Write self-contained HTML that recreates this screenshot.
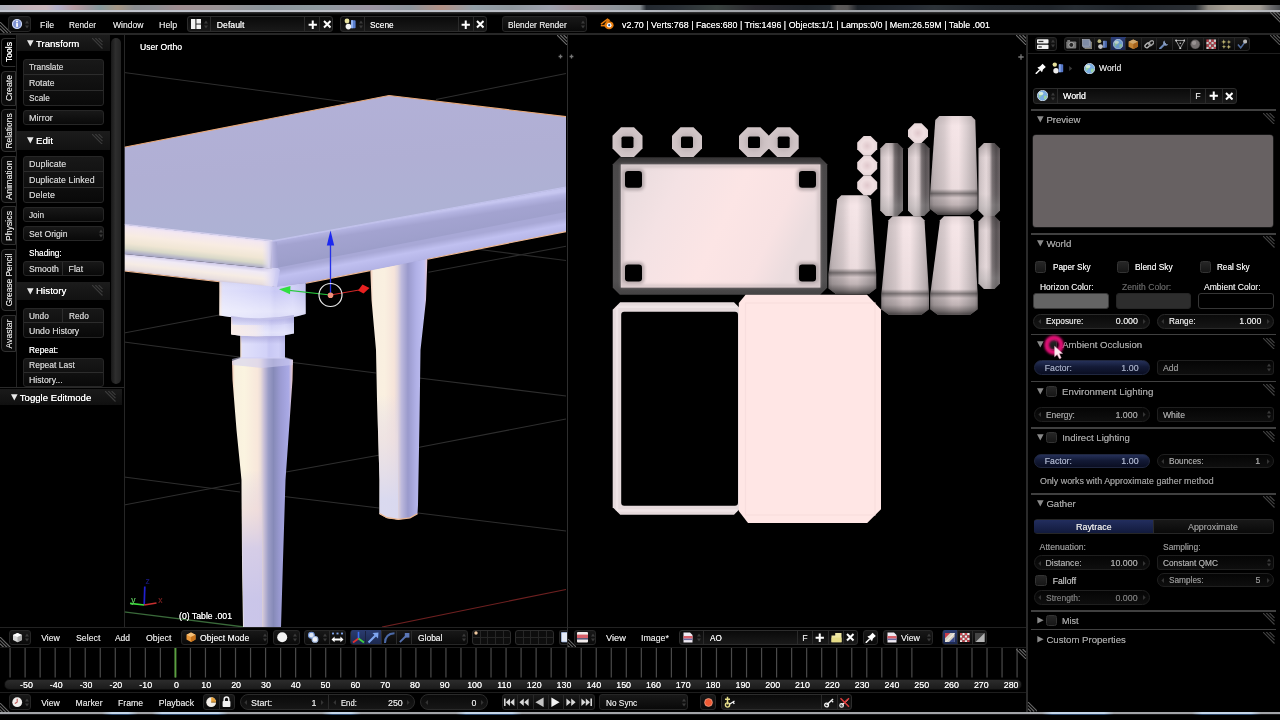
<!DOCTYPE html>
<html><head><meta charset="utf-8"><title>Blender</title>
<style>
html,body{margin:0;padding:0;background:#000;}
body{width:1280px;height:720px;position:relative;overflow:hidden;font-family:"Liberation Sans",sans-serif;filter:blur(0.45px);}
div,span.t,svg.a{position:absolute;box-sizing:border-box;}
span.t{white-space:nowrap;line-height:12px;text-shadow:0 0 0.45px currentColor;}
.btn{background:linear-gradient(#181818,#090909);border:1px solid #262626;border-radius:3px;}
.nob{}
.fld{background:linear-gradient(#0a0a0a,#191919);border:1px solid #2c2c2c;border-radius:3px;}
.num{background:linear-gradient(#0a0a0a,#161616);border:1px solid #2a2a2a;border-radius:8px;}
.sld{background:linear-gradient(#253058,#131a36 45%,#0a0e22);border:1px solid #20273f;border-radius:8px;}
.chk{background:linear-gradient(#262626,#161616);border:1px solid #333;border-radius:2.5px;}
.sep{background:#3a3a3a;height:1.5px;}
.dim{border-color:#1f1f1f !important;background:linear-gradient(#050505,#0e0e0e) !important;}
</style></head><body>
<div style="left:0px;top:5px;width:1280px;height:5.5px;background:linear-gradient(90deg,#aeb1bd 0%,#c6b3ba 2.5%,#c9b6bb 3.6%,#b3b0cb 4.5%,#b79da3 5.8%,#a0979d 6.8%,#86999d 7.8%,#a69685 9.2%,#8b8d91 10.5%,#8e8f95 12%,#a08e92 14%,#9a9396 17%,#8a959b 21%,#8f9aa0 25%,#9b93a2 29%,#8c959c 32%,#b39286 34.5%,#93a0a8 37%,#8f979e 40%,#9ea2ae 43%,#a3949c 45%,#8f959b 48%,#878d92 50%,#232930 50.5%,#2a3036 53%,#3a4240 56%,#2b2a30 59%,#20252b 63%,#242a30 64.8%,#5c5a5a 65.4%,#585656 66.2%,#1d2228 67%,#252b33 71%,#2d3339 73%,#23282e 77%,#20252b 82%,#282e34 84%,#20252b 88%,#2a2e33 93.4%,#8f8a82 94.4%,#aaa296 96%,#a49e96 98.4%,#6a6a6c 99.3%,#4a4c50 100%);filter:blur(0.6px);"></div>
<div style="left:0px;top:10.2px;width:1280px;height:1.5px;background:linear-gradient(90deg,#c4c7d0 0%,#b8bcc4 50%,#a2a5aa 55%,#9a9da2 92%,#c0c2c6 97%,#b0b2b6 100%);"></div>
<div style="left:0px;top:11.6px;width:1280px;height:3.2px;background:linear-gradient(#3a3a3c,#1a1a1a 45%,#000);"></div>
<div style="left:0px;top:33px;width:1280px;height:1.5px;background:#272727;"></div>
<svg class="a" style="left:0px;top:22px;" width="11" height="11" viewBox="0 0 11 11"><line x1="0" y1="0" x2="11" y2="11" stroke="#6a6a6a" stroke-width="1.1"/><line x1="0" y1="3.3" x2="7.7" y2="11" stroke="#6a6a6a" stroke-width="1.1"/><line x1="0" y1="6.6" x2="4.4" y2="11" stroke="#6a6a6a" stroke-width="1.1"/></svg>
<div class="btn" style="left:8px;top:16px;width:22.5px;height:15.5px;"></div>
<svg class="a" style="left:11.5px;top:19px;" width="10" height="10" viewBox="0 0 10 10"><circle cx="5" cy="5" r="4.8" fill="#7f93d4"/><circle cx="5" cy="5" r="4.5" fill="none" stroke="#cdd8f2" stroke-width="1.1"/><rect x="4.2" y="4.1" width="1.7" height="3.8" fill="#fff"/><circle cx="5" cy="2.6" r="1" fill="#fff"/></svg>
<svg class="a" style="left:24.5px;top:19.9px;" width="4" height="9" viewBox="0 0 4 9"><path d="M0 3.4 L2 0.6 L4 3.4 Z M0 5.6 L2 8.4 L4 5.6 Z" fill="#3a3a3a"/></svg>
<span class="t" style="left:39.50px;top:19px;font-size:8.70px;color:#d6d6d6;transform:scaleX(1.013);transform-origin:left center;">File</span>
<span class="t" style="left:69.30px;top:19px;font-size:8.70px;color:#d6d6d6;transform:scaleX(0.946);transform-origin:left center;">Render</span>
<span class="t" style="left:112.50px;top:19px;font-size:8.70px;color:#d6d6d6;transform:scaleX(0.986);transform-origin:left center;">Window</span>
<span class="t" style="left:158.80px;top:19px;font-size:8.70px;color:#d6d6d6;transform:scaleX(1.017);transform-origin:left center;">Help</span>
<div class="fld" style="left:186.5px;top:16px;width:146.5px;height:15.5px;"></div>
<svg class="a" style="left:191px;top:18.5px;" width="10" height="10" viewBox="0 0 10 10"><rect x="0" y="0" width="4.4" height="10" fill="#f2f2f2"/><rect x="5.4" y="0" width="4.6" height="4.6" fill="#f2f2f2"/><rect x="5.4" y="5.5" width="4.6" height="4.5" fill="#f2f2f2"/></svg>
<svg class="a" style="left:204.3px;top:19.9px;" width="4" height="9" viewBox="0 0 4 9"><path d="M0 3.4 L2 0.6 L4 3.4 Z M0 5.6 L2 8.4 L4 5.6 Z" fill="#3a3a3a"/></svg>
<div style="left:210px;top:17px;width:1px;height:13.5px;background:#2a2a2a;"></div>
<span class="t" style="left:216.80px;top:19px;font-size:8.70px;color:#f0f0f0;">Default</span>
<div style="left:304px;top:17px;width:1px;height:13.5px;background:#2a2a2a;"></div>
<div style="left:319px;top:17px;width:1px;height:13.5px;background:#2a2a2a;"></div>
<svg class="a" style="left:307.95px;top:19.65px;" width="9.5" height="9.5" viewBox="0 0 9.5 9.5"><path d="M4.75 0.6 V8.9 M0.6 4.75 H8.9" stroke="#fff" stroke-width="2.0" fill="none"/></svg>
<svg class="a" style="left:322.75px;top:20.15px;" width="8.5" height="8.5" viewBox="0 0 8.5 8.5"><path d="M1 1 L7.5 7.5 M7.5 1 L1 7.5" stroke="#fff" stroke-width="2.0" fill="none"/></svg>
<div class="fld" style="left:339.5px;top:16px;width:147.5px;height:15.5px;"></div>
<svg class="a" style="left:343.5px;top:18px;" width="13" height="12" viewBox="0 0 13 12"><circle cx="3" cy="3" r="2.4" fill="#e9e4a0"/><circle cx="4.4" cy="8.6" r="2.8" fill="#f4f4f4"/><rect x="7" y="2.2" width="4.6" height="8" rx="0.8" fill="#5a7fd0"/><rect x="7" y="2.2" width="2" height="8" fill="#8fb0ee"/></svg>
<svg class="a" style="left:358.5px;top:19.9px;" width="4" height="9" viewBox="0 0 4 9"><path d="M0 3.4 L2 0.6 L4 3.4 Z M0 5.6 L2 8.4 L4 5.6 Z" fill="#3a3a3a"/></svg>
<div style="left:363.5px;top:17px;width:1px;height:13.5px;background:#2a2a2a;"></div>
<span class="t" style="left:369.80px;top:19px;font-size:8.70px;color:#f0f0f0;transform:scaleX(0.961);transform-origin:left center;">Scene</span>
<div style="left:457.5px;top:17px;width:1px;height:13.5px;background:#2a2a2a;"></div>
<div style="left:472.5px;top:17px;width:1px;height:13.5px;background:#2a2a2a;"></div>
<svg class="a" style="left:461.05px;top:19.65px;" width="9.5" height="9.5" viewBox="0 0 9.5 9.5"><path d="M4.75 0.6 V8.9 M0.6 4.75 H8.9" stroke="#fff" stroke-width="2.0" fill="none"/></svg>
<svg class="a" style="left:475.75px;top:20.15px;" width="8.5" height="8.5" viewBox="0 0 8.5 8.5"><path d="M1 1 L7.5 7.5 M7.5 1 L1 7.5" stroke="#fff" stroke-width="2.0" fill="none"/></svg>
<div class="btn" style="left:501.5px;top:16px;width:85px;height:15.5px;"></div>
<span class="t" style="left:507.50px;top:19px;font-size:8.70px;color:#dcdcdc;transform:scaleX(0.965);transform-origin:left center;">Blender Render</span>
<svg class="a" style="left:581px;top:19.9px;" width="4" height="9" viewBox="0 0 4 9"><path d="M0 3.4 L2 0.6 L4 3.4 Z M0 5.6 L2 8.4 L4 5.6 Z" fill="#3a3a3a"/></svg>
<svg class="a" style="left:599.5px;top:17.5px;" width="15" height="12" viewBox="0 0 15 12"><path d="M1 6.2 L7.5 1.2 L9 2.2 L6.5 4.2" stroke="#e87d0d" stroke-width="1.6" fill="none"/><path d="M0.8 7.6 L6 7.6" stroke="#e87d0d" stroke-width="1.6"/><ellipse cx="9" cy="7.2" rx="4.6" ry="4" fill="#e87d0d"/><circle cx="9.2" cy="7.2" r="2.3" fill="#fff"/><circle cx="9.2" cy="7.2" r="1.1" fill="#2c5a9c"/></svg>
<span class="t" style="left:621.70px;top:19px;font-size:8.70px;color:#f2f2f2;transform:scaleX(1.025);transform-origin:left center;">v2.70 | Verts:768 | Faces:680 | Tris:1496 | Objects:1/1 | Lamps:0/0 | Mem:26.59M | Table .001</span>
<div style="left:15.5px;top:35px;width:1px;height:353px;background:#242424;"></div>
<div style="left:1.3px;top:38px;width:15.2px;height:29px;background:#000;border:1px solid #303030;border-right:1px solid #000;border-radius:4px 0 0 4px;"></div>
<span class="t" style="left:9.30px;top:52.30px;font-size:9.60px;line-height:9.60px;color:#fff;text-shadow:0 0 0.6px #fff;transform:translate(-50%,-50%) rotate(-90deg) scaleX(0.892);">Tools</span>
<div style="left:1.3px;top:71px;width:15.2px;height:34.5px;background:#0b0b0b;border:1px solid #303030;border-right:1px solid #303030;border-radius:4px 0 0 4px;"></div>
<span class="t" style="left:9.30px;top:87.60px;font-size:9.60px;line-height:9.60px;color:#d8d8d8;text-shadow:0 0 0.6px #d8d8d8;transform:translate(-50%,-50%) rotate(-90deg) scaleX(0.909);">Create</span>
<div style="left:1.3px;top:108.6px;width:15.2px;height:43.4px;background:#0b0b0b;border:1px solid #303030;border-right:1px solid #303030;border-radius:4px 0 0 4px;"></div>
<span class="t" style="left:9.30px;top:130.60px;font-size:9.60px;line-height:9.60px;color:#d8d8d8;text-shadow:0 0 0.6px #d8d8d8;transform:translate(-50%,-50%) rotate(-90deg) scaleX(0.880);">Relations</span>
<div style="left:1.3px;top:156px;width:15.2px;height:46.8px;background:#0b0b0b;border:1px solid #303030;border-right:1px solid #303030;border-radius:4px 0 0 4px;"></div>
<span class="t" style="left:9.30px;top:180.30px;font-size:9.60px;line-height:9.60px;color:#d8d8d8;text-shadow:0 0 0.6px #d8d8d8;transform:translate(-50%,-50%) rotate(-90deg) scaleX(0.923);">Animation</span>
<div style="left:1.3px;top:206px;width:15.2px;height:39px;background:#0b0b0b;border:1px solid #303030;border-right:1px solid #303030;border-radius:4px 0 0 4px;"></div>
<span class="t" style="left:9.30px;top:226.00px;font-size:9.60px;line-height:9.60px;color:#d8d8d8;text-shadow:0 0 0.6px #d8d8d8;transform:translate(-50%,-50%) rotate(-90deg) scaleX(0.907);">Physics</span>
<div style="left:1.3px;top:248.5px;width:15.2px;height:62.5px;background:#0b0b0b;border:1px solid #303030;border-right:1px solid #303030;border-radius:4px 0 0 4px;"></div>
<span class="t" style="left:9.30px;top:280.15px;font-size:9.60px;line-height:9.60px;color:#d8d8d8;text-shadow:0 0 0.6px #d8d8d8;transform:translate(-50%,-50%) rotate(-90deg) scaleX(0.874);">Grease Pencil</span>
<div style="left:1.3px;top:314.5px;width:15.2px;height:37.5px;background:#0b0b0b;border:1px solid #303030;border-right:1px solid #303030;border-radius:4px 0 0 4px;"></div>
<span class="t" style="left:9.30px;top:333.50px;font-size:9.60px;line-height:9.60px;color:#d8d8d8;text-shadow:0 0 0.6px #d8d8d8;transform:translate(-50%,-50%) rotate(-90deg) scaleX(0.896);">Avastar</span>
<div style="left:16.5px;top:35px;width:93px;height:16px;background:linear-gradient(#1c1c1c,#121212);"></div>
<svg class="a" style="left:26.7px;top:39.8px;" width="7" height="7" viewBox="0 0 7 7"><path d="M0 0.3 L6.6 0.3 L3.3 6.6 Z" fill="#e8e8e8"/></svg>
<span class="t" style="left:36.00px;top:38px;font-size:9.60px;color:#fff;text-shadow:0 0 0.6px #fff;">Transform</span>
<svg class="a" style="left:92px;top:38px;" width="10.5" height="10.5" viewBox="0 0 10.5 10.5"><line x1="0" y1="0" x2="10.5" y2="10.5" stroke="#3c3c3c" stroke-width="1.1"/><line x1="3.3" y1="0" x2="10.5" y2="7.2" stroke="#3c3c3c" stroke-width="1.1"/><line x1="6.6" y1="0" x2="10.5" y2="3.9" stroke="#3c3c3c" stroke-width="1.1"/></svg>
<div class="btn" style="left:22.8px;top:59px;width:81.2px;height:46.5px;"></div>
<span class="t" style="left:29.00px;top:61px;font-size:8.70px;color:#c8c8c8;transform:scaleX(0.960);transform-origin:left center;">Translate</span>
<div style="left:23.8px;top:74px;width:79.2px;height:1px;background:#2c2c2c;"></div>
<span class="t" style="left:29.00px;top:77px;font-size:8.70px;color:#c8c8c8;">Rotate</span>
<div style="left:23.8px;top:89.5px;width:79.2px;height:1px;background:#2c2c2c;"></div>
<span class="t" style="left:29.00px;top:92px;font-size:8.70px;color:#c8c8c8;transform:scaleX(0.956);transform-origin:left center;">Scale</span>
<div class="btn" style="left:22.8px;top:109.7px;width:81.2px;height:14.9px;"></div>
<span class="t" style="left:29.00px;top:112px;font-size:8.70px;color:#c8c8c8;transform:scaleX(1.048);transform-origin:left center;">Mirror</span>
<div style="left:16.5px;top:130.5px;width:93px;height:19px;background:linear-gradient(#1c1c1c,#121212);"></div>
<svg class="a" style="left:26.7px;top:136.8px;" width="7" height="7" viewBox="0 0 7 7"><path d="M0 0.3 L6.6 0.3 L3.3 6.6 Z" fill="#e8e8e8"/></svg>
<span class="t" style="left:36.00px;top:135px;font-size:9.60px;color:#fff;transform:scaleX(1.028);transform-origin:left center;text-shadow:0 0 0.6px #fff;">Edit</span>
<svg class="a" style="left:92px;top:133.5px;" width="10.5" height="10.5" viewBox="0 0 10.5 10.5"><line x1="0" y1="0" x2="10.5" y2="10.5" stroke="#3c3c3c" stroke-width="1.1"/><line x1="3.3" y1="0" x2="10.5" y2="7.2" stroke="#3c3c3c" stroke-width="1.1"/><line x1="6.6" y1="0" x2="10.5" y2="3.9" stroke="#3c3c3c" stroke-width="1.1"/></svg>
<div class="btn" style="left:22.8px;top:156px;width:81.2px;height:46.6px;"></div>
<span class="t" style="left:29.00px;top:158px;font-size:8.70px;color:#c8c8c8;transform:scaleX(1.028);transform-origin:left center;">Duplicate</span>
<div style="left:23.8px;top:171.033px;width:79.2px;height:1px;background:#2c2c2c;"></div>
<span class="t" style="left:29.00px;top:174px;font-size:8.70px;color:#c8c8c8;transform:scaleX(1.021);transform-origin:left center;">Duplicate Linked</span>
<div style="left:23.8px;top:186.567px;width:79.2px;height:1px;background:#2c2c2c;"></div>
<span class="t" style="left:29.00px;top:189px;font-size:8.70px;color:#c8c8c8;transform:scaleX(1.034);transform-origin:left center;">Delete</span>
<div class="btn" style="left:22.8px;top:206.6px;width:81.2px;height:15px;"></div>
<span class="t" style="left:29.00px;top:209px;font-size:8.70px;color:#c8c8c8;transform:scaleX(0.940);transform-origin:left center;">Join</span>
<div class="btn" style="left:22.8px;top:225.8px;width:81.2px;height:15.2px;"></div>
<span class="t" style="left:29.00px;top:228px;font-size:8.70px;color:#c8c8c8;">Set Origin</span>
<svg class="a" style="left:98.5px;top:229px;" width="4" height="9" viewBox="0 0 4 9"><path d="M0 3.4 L2 0.6 L4 3.4 Z M0 5.6 L2 8.4 L4 5.6 Z" fill="#3a3a3a"/></svg>
<span class="t" style="left:28.80px;top:247px;font-size:8.70px;color:#f4f4f4;transform:scaleX(0.952);transform-origin:left center;">Shading:</span>
<div class="btn" style="left:22.8px;top:261px;width:81.2px;height:15.2px;"></div>
<span class="t" style="left:29.00px;top:263px;font-size:8.70px;color:#c8c8c8;">Smooth</span>
<div style="left:62px;top:262px;width:1px;height:13.2px;background:#2c2c2c;"></div>
<span class="t" style="left:68.60px;top:263px;font-size:8.70px;color:#c8c8c8;">Flat</span>
<div style="left:16.5px;top:282px;width:93px;height:17.5px;background:linear-gradient(#1c1c1c,#121212);"></div>
<svg class="a" style="left:26.7px;top:287.55px;" width="7" height="7" viewBox="0 0 7 7"><path d="M0 0.3 L6.6 0.3 L3.3 6.6 Z" fill="#e8e8e8"/></svg>
<span class="t" style="left:36.00px;top:285px;font-size:9.60px;color:#fff;transform:scaleX(1.021);transform-origin:left center;text-shadow:0 0 0.6px #fff;">History</span>
<svg class="a" style="left:92px;top:285px;" width="10.5" height="10.5" viewBox="0 0 10.5 10.5"><line x1="0" y1="0" x2="10.5" y2="10.5" stroke="#3c3c3c" stroke-width="1.1"/><line x1="3.3" y1="0" x2="10.5" y2="7.2" stroke="#3c3c3c" stroke-width="1.1"/><line x1="6.6" y1="0" x2="10.5" y2="3.9" stroke="#3c3c3c" stroke-width="1.1"/></svg>
<div class="btn" style="left:22.8px;top:308.2px;width:81.2px;height:29.4px;"></div>
<span class="t" style="left:29.00px;top:310px;font-size:8.70px;color:#c8c8c8;transform:scaleX(0.952);transform-origin:left center;">Undo</span>
<div style="left:62px;top:309.2px;width:1px;height:12.7px;background:#2c2c2c;"></div>
<span class="t" style="left:68.60px;top:310px;font-size:8.70px;color:#c8c8c8;transform:scaleX(0.952);transform-origin:left center;">Redo</span>
<div style="left:23.8px;top:322.4px;width:79.2px;height:1px;background:#2c2c2c;"></div>
<span class="t" style="left:29.00px;top:325px;font-size:8.70px;color:#c8c8c8;">Undo History</span>
<span class="t" style="left:28.80px;top:344px;font-size:8.70px;color:#f4f4f4;transform:scaleX(0.958);transform-origin:left center;">Repeat:</span>
<div class="btn" style="left:22.8px;top:357.6px;width:81.2px;height:29.8px;"></div>
<span class="t" style="left:29.00px;top:359px;font-size:8.70px;color:#c8c8c8;transform:scaleX(0.980);transform-origin:left center;">Repeat Last</span>
<div style="left:23.8px;top:372px;width:79.2px;height:1px;background:#2c2c2c;"></div>
<span class="t" style="left:29.00px;top:374px;font-size:8.70px;color:#c8c8c8;">History...</span>
<div style="left:111.2px;top:38px;width:9.6px;height:346px;background:linear-gradient(90deg,#181818,#2e2e2e 45%,#232323 100%);border-radius:5px;"></div>
<div style="left:0px;top:387.2px;width:124px;height:1.3px;background:#2a2a2a;"></div>
<div style="left:0px;top:388.5px;width:121.5px;height:16.5px;background:linear-gradient(#1a1a1a,#101010);"></div>
<svg class="a" style="left:10.5px;top:394.3px;" width="7" height="7" viewBox="0 0 7 7"><path d="M0 0.3 L6.6 0.3 L3.3 6.6 Z" fill="#e8e8e8"/></svg>
<span class="t" style="left:19.80px;top:392px;font-size:9.60px;color:#fff;text-shadow:0 0 0.6px #fff;">Toggle Editmode</span>
<svg class="a" style="left:105px;top:391px;" width="10.5" height="10.5" viewBox="0 0 10.5 10.5"><line x1="0" y1="0" x2="10.5" y2="10.5" stroke="#3c3c3c" stroke-width="1.1"/><line x1="3.3" y1="0" x2="10.5" y2="7.2" stroke="#3c3c3c" stroke-width="1.1"/><line x1="6.6" y1="0" x2="10.5" y2="3.9" stroke="#3c3c3c" stroke-width="1.1"/></svg>
<div style="left:0px;top:388.5px;width:124px;height:240px;background:transparent;"></div>
<div style="left:123.6px;top:35px;width:1.2px;height:593px;background:#262626;"></div>
<svg class="a" style="left:0px;top:0px;" width="1280" height="720" viewBox="0 0 1280 720"><defs>
<clipPath id="vp"><rect x="124.8" y="35" width="441.6" height="592"/></clipPath>
<linearGradient id="gTop" x1="0" y1="0" x2="0.25" y2="1"><stop offset="0" stop-color="#b3b1d8"/><stop offset="0.55" stop-color="#b0afd4"/><stop offset="1" stop-color="#adb2d4"/></linearGradient>
<linearGradient id="gFront" gradientUnits="userSpaceOnUse" x1="190" y1="231.8" x2="186.8" y2="261"><stop offset="0" stop-color="#e6def6"/><stop offset="0.1" stop-color="#f4e8f0"/><stop offset="0.35" stop-color="#f8ece2"/><stop offset="0.62" stop-color="#f0e6d4"/><stop offset="0.8" stop-color="#d8d8c8"/><stop offset="0.92" stop-color="#b4b4c8"/><stop offset="1" stop-color="#a0a0c4"/></linearGradient>
<linearGradient id="gFront2" gradientUnits="userSpaceOnUse" x1="190" y1="260.6" x2="188" y2="278.5"><stop offset="0" stop-color="#cfcaea"/><stop offset="0.2" stop-color="#f0eaf6"/><stop offset="0.55" stop-color="#f6ece4"/><stop offset="0.85" stop-color="#e8dede"/><stop offset="1" stop-color="#cfc6da"/></linearGradient>
<linearGradient id="gSide" gradientUnits="userSpaceOnUse" x1="420" y1="214" x2="425" y2="246"><stop offset="0" stop-color="#c6c6f0"/><stop offset="0.1" stop-color="#b4b4e2"/><stop offset="0.3" stop-color="#a3a3d0"/><stop offset="0.7" stop-color="#9fa0cc"/><stop offset="1" stop-color="#9a9cc8"/></linearGradient>
<linearGradient id="gSide2" gradientUnits="userSpaceOnUse" x1="420" y1="244" x2="424" y2="266"><stop offset="0" stop-color="#a8a8d6"/><stop offset="0.3" stop-color="#c0c0f0"/><stop offset="0.7" stop-color="#b4b4e6"/><stop offset="1" stop-color="#a8a6d4"/></linearGradient>
<linearGradient id="gLeg" x1="0" y1="0" x2="1" y2="0"><stop offset="0" stop-color="#f2c4ae"/><stop offset="0.045" stop-color="#f8f0de"/><stop offset="0.2" stop-color="#fbf4e0"/><stop offset="0.42" stop-color="#f8e7db"/><stop offset="0.47" stop-color="#eadcd8"/><stop offset="0.53" stop-color="#c4bcd6"/><stop offset="0.6" stop-color="#9a9cc6"/><stop offset="0.68" stop-color="#868ab8"/><stop offset="0.8" stop-color="#9c9cd4"/><stop offset="0.93" stop-color="#aaaae6"/><stop offset="0.97" stop-color="#d4c0dc"/><stop offset="1" stop-color="#f0c8b8"/></linearGradient>
<linearGradient id="gLegB" x1="0" y1="0" x2="1" y2="0"><stop offset="0" stop-color="#f2c4ae"/><stop offset="0.06" stop-color="#f8eee0"/><stop offset="0.25" stop-color="#faf0e0"/><stop offset="0.42" stop-color="#f6e4da"/><stop offset="0.48" stop-color="#e2d6dc"/><stop offset="0.55" stop-color="#bcb8dc"/><stop offset="0.66" stop-color="#9a9acc"/><stop offset="0.8" stop-color="#b0b0e6"/><stop offset="0.94" stop-color="#c0c0f2"/><stop offset="0.98" stop-color="#dcc4dc"/><stop offset="1" stop-color="#f0c8b8"/></linearGradient>
<linearGradient id="gBlk" x1="0" y1="0" x2="1" y2="0"><stop offset="0" stop-color="#f4dccc"/><stop offset="0.04" stop-color="#e0e0fa"/><stop offset="0.3" stop-color="#dadafa"/><stop offset="0.58" stop-color="#d2d2f8"/><stop offset="0.64" stop-color="#c8c8f4"/><stop offset="0.85" stop-color="#d0d0f8"/><stop offset="1" stop-color="#c0c0ee"/></linearGradient>
<linearGradient id="gBlkV" x1="0" y1="0" x2="0" y2="1"><stop offset="0" stop-color="#9090c8" stop-opacity="0.25"/><stop offset="0.3" stop-color="#fff" stop-opacity="0"/><stop offset="0.8" stop-color="#fff" stop-opacity="0.45"/><stop offset="1" stop-color="#fff" stop-opacity="0.3"/></linearGradient>
</defs><g clip-path="url(#vp)"><line x1="124" y1="72.5" x2="392" y2="108" stroke="#2e2e2e" stroke-width="1.1" /><line x1="566" y1="73.5" x2="436" y2="99.5" stroke="#2e2e2e" stroke-width="1.1" /><line x1="124" y1="333" x2="222" y2="314.5" stroke="#2e2e2e" stroke-width="1.1" /><line x1="124" y1="342" x2="243" y2="357.5" stroke="#2e2e2e" stroke-width="1.1" /><line x1="428.5" y1="272.2" x2="566" y2="246.3" stroke="#2c2c2c" stroke-width="1.1" /><line x1="476" y1="249" x2="566" y2="260.5" stroke="#2a2a2a" stroke-width="1.1" /><line x1="293" y1="362.5" x2="376" y2="373" stroke="#2e2e2e" stroke-width="1.1" /><line x1="419" y1="378" x2="566" y2="396" stroke="#2e2e2e" stroke-width="1.1" /><line x1="286" y1="472" x2="380" y2="455" stroke="#2e2e2e" stroke-width="1.1" /><line x1="418" y1="447.5" x2="566" y2="419" stroke="#2e2e2e" stroke-width="1.1" /><line x1="124" y1="477" x2="240" y2="492" stroke="#2e2e2e" stroke-width="1.1" /><line x1="284" y1="496.5" x2="379" y2="508" stroke="#2e2e2e" stroke-width="1.1" /><line x1="418" y1="513" x2="566" y2="531" stroke="#2e2e2e" stroke-width="1.1" /><line x1="124" y1="505" x2="240" y2="483" stroke="#2e2e2e" stroke-width="1.1" /><line x1="124" y1="611.8" x2="244" y2="627" stroke="#3a6a3a" stroke-width="1.3" /><line x1="382" y1="627" x2="566" y2="589.5" stroke="#6e2020" stroke-width="1.2" /><polygon points="370,262 427.5,255 426,300 420.5,350 419.5,420 418,505 417.5,514 410,518 398.5,519.5 387,518 379.5,514 379.5,480 377,400 376,350 371.5,300" fill="url(#gLegB)" /><linearGradient id="gLegLowB" gradientUnits="userSpaceOnUse" x1="0" y1="395" x2="0" y2="500"><stop offset="0" stop-color="#d8d4ee" stop-opacity="0"/><stop offset="0.4" stop-color="#e8dce4" stop-opacity="0.6"/><stop offset="1" stop-color="#d8d8f0" stop-opacity="0.95"/></linearGradient><polygon points="377,395 398,395 398,519.5 387,518 379.5,514 379.5,480" fill="url(#gLegLowB)" /><path d="M379.5 513.5 L387 517.7 L398.5 519.3 L410 517.8 L417.5 513.8" stroke="#eeb890" stroke-width="1.2" fill="none"/><polygon points="240.5,333 285,333 285,358 293,360 292.5,380 289,430 285.5,480 283,560 281,628 243,628 242,560 241.5,480 236.5,430 232.5,380 232,361 240.5,358" fill="url(#gLeg)" /><linearGradient id="gLegLow" gradientUnits="userSpaceOnUse" x1="0" y1="470" x2="0" y2="600"><stop offset="0" stop-color="#d0c8ea" stop-opacity="0"/><stop offset="0.3" stop-color="#e8d4dc" stop-opacity="0.55"/><stop offset="0.6" stop-color="#d2cae8" stop-opacity="0.9"/><stop offset="1" stop-color="#c8c4ea" stop-opacity="0.95"/></linearGradient><polygon points="241.5,470 262,470 262,628 243.6,628 242.3,560" fill="url(#gLegLow)" /><polygon points="240.5,335 285,335 285,358.5 240.5,358.5" fill="url(#gBlk)" /><polygon points="232,359 240.5,357 285,357 293,359.5 292.8,365 262,368 232.3,365" fill="#cfcdf2" opacity="0.55"/><path d="M231 313 H294 V333.5 Q275 337.5 262 337.5 Q245 337 231 334.5 Z" fill="url(#gBlk)"/><path d="M231 313 H294 V333.5 Q275 337.5 262 337.5 Q245 337 231 334.5 Z" fill="url(#gBlkV)"/><path d="M219.3 279 H305.7 V314 Q288 319.5 270 319.5 Q240 319 219.3 315.5 Z" fill="url(#gBlk)"/><path d="M219.3 279 H305.7 V314 Q288 319.5 270 319.5 Q240 319 219.3 315.5 Z" fill="url(#gBlkV)"/><linearGradient id="gSh" x1="0" y1="0" x2="0" y2="1"><stop offset="0" stop-color="#9c98d0" stop-opacity="0.6"/><stop offset="1" stop-color="#9c98d0" stop-opacity="0"/></linearGradient><path d="M231 316 Q262 321 294 315 V323 Q262 329 231 324 Z" fill="url(#gSh)"/><rect x="240.5" y="336" width="44.5" height="8" fill="url(#gSh)"/><linearGradient id="gCream" x1="0" y1="0" x2="1" y2="0"><stop offset="0" stop-color="#faece4" stop-opacity="0.85"/><stop offset="0.7" stop-color="#faece4" stop-opacity="0.5"/><stop offset="1" stop-color="#faece4" stop-opacity="0"/></linearGradient><path d="M232 325 H266 V337 Q246 336.5 232 334.5 Z" fill="url(#gCream)"/><polygon points="272,241 566,187.5 566,231.5 370,270 306,283 272,287" fill="url(#gSide)" /><polygon points="276,268 566,212 566,231.5 370,270.5 306,283 274,287" fill="url(#gSide2)" /><path d="M306 283.2 L370 270.6 M427.5 259.2 L566 231.6" stroke="#f0b890" stroke-width="1.1" fill="none"/><polygon points="124,224.5 272.5,241 270,268.5 124,254" fill="url(#gFront)" /><polygon points="124,254 270,268.5 276,270 273,286.5 219,281.5 124,270.8" fill="url(#gFront2)" /><path d="M124 271 L219.5 281.8" stroke="#f0b890" stroke-width="1.1" fill="none"/><linearGradient id="gCorner" gradientUnits="userSpaceOnUse" x1="262" y1="0" x2="277" y2="0"><stop offset="0" stop-color="#e8e2f4" stop-opacity="0"/><stop offset="0.45" stop-color="#dcd8f2" stop-opacity="0.9"/><stop offset="0.75" stop-color="#b4b2dc" stop-opacity="1"/><stop offset="1" stop-color="#a2a2d0" stop-opacity="1"/></linearGradient><polygon points="262,240 272.5,241.2 277,242 278,268 262,268" fill="url(#gCorner)" /><linearGradient id="gCorner2" gradientUnits="userSpaceOnUse" x1="262" y1="0" x2="280" y2="0"><stop offset="0" stop-color="#f0eaf6" stop-opacity="0"/><stop offset="0.5" stop-color="#e0dcf6" stop-opacity="0.9"/><stop offset="1" stop-color="#c2c2f0" stop-opacity="1"/></linearGradient><polygon points="262,267.8 278,268 280,270 277,287 262,285.6" fill="url(#gCorner2)" /><polygon points="124,147.3 389,95.5 566,116.6 566,187.5 272.5,241.2 124,224.6" fill="url(#gTop)" /><path d="M124 147.3 L389 95.5 L566 116.6" stroke="#e8a878" stroke-width="1.1" fill="none"/><path d="M272.5 241 L566 187.4" stroke="#c4c4ee" stroke-width="1.6" fill="none" opacity="0.9"/><path d="M124 224.4 L272.5 240.8" stroke="#d8d4f2" stroke-width="1.4" fill="none" opacity="0.9"/><line x1="330.5" y1="295" x2="330.5" y2="243" stroke="#2430e8" stroke-width="1.3" /><polygon points="330.5,230.5 334.2,245.5 326.8,245.5" fill="#1c28f0" /><line x1="330.5" y1="295" x2="287" y2="290.2" stroke="#28c83c" stroke-width="1.2" /><polygon points="279,289.3 290.5,286 290,294.2" fill="#30e040" /><line x1="330.5" y1="295" x2="362" y2="289.5" stroke="#d02828" stroke-width="1.2" /><polygon points="369.5,288 362.5,284.4 358,290.4 363.5,293.6" fill="#e82020" /><circle cx="330.5" cy="295" r="11.5" fill="none" stroke="#e8e8e8" stroke-width="1.2"/><circle cx="330.5" cy="295.3" r="2.8" fill="#f0907a"/><line x1="144.2" y1="605" x2="144.8" y2="586.5" stroke="#2020d0" stroke-width="1.7" /><line x1="144.2" y1="605" x2="130" y2="603.4" stroke="#3ce03c" stroke-width="1.6" /><line x1="144.2" y1="605" x2="156.5" y2="603" stroke="#c83030" stroke-width="1.6" /></g></svg>
<span class="t" style="left:140.00px;top:41px;font-size:8.70px;color:#f8f8f8;transform:scaleX(0.987);transform-origin:left center;text-shadow:0 0 0.5px #fff;">User Ortho</span>
<span class="t" style="left:179.00px;top:610px;font-size:8.70px;color:#f8f8f8;text-shadow:0 0 0.5px #fff;">(0) Table .001</span>
<span class="t" style="left:131.20px;top:594px;font-size:8.50px;color:#58b858;">y</span>
<span class="t" style="left:158.20px;top:594px;font-size:8.50px;color:#6a1c1c;">x</span>
<span class="t" style="left:145.50px;top:575px;font-size:8.50px;color:#16166c;">z</span>
<svg class="a" style="left:0px;top:0px;" width="1280" height="720" viewBox="0 0 1280 720"><defs>
<linearGradient id="uLeg" x1="0" y1="0" x2="1" y2="0"><stop offset="0" stop-color="#a39a9c"/><stop offset="0.08" stop-color="#c2b7b9"/><stop offset="0.3" stop-color="#d8cbcd"/><stop offset="0.46" stop-color="#f4e4e6"/><stop offset="0.6" stop-color="#f6e6e8"/><stop offset="0.78" stop-color="#d8cccE"/><stop offset="0.94" stop-color="#bcb1b3"/><stop offset="1" stop-color="#9c9395"/></linearGradient>
<linearGradient id="uLegV" x1="0" y1="0" x2="0" y2="1"><stop offset="0" stop-color="#000" stop-opacity="0.06"/><stop offset="0.1" stop-color="#000" stop-opacity="0"/><stop offset="0.74" stop-color="#000" stop-opacity="0.04"/><stop offset="0.785" stop-color="#000" stop-opacity="0.45"/><stop offset="0.83" stop-color="#000" stop-opacity="0.14"/><stop offset="0.9" stop-color="#000" stop-opacity="0.22"/><stop offset="0.96" stop-color="#000" stop-opacity="0.46"/><stop offset="1" stop-color="#000" stop-opacity="0.68"/></linearGradient>
<linearGradient id="uStrip" x1="0" y1="0" x2="1" y2="0"><stop offset="0" stop-color="#cbbfc1"/><stop offset="0.12" stop-color="#dccfd1"/><stop offset="0.36" stop-color="#f0e2e4"/><stop offset="0.52" stop-color="#d6c9cb"/><stop offset="0.64" stop-color="#7c7476"/><stop offset="0.82" stop-color="#5c5658"/><stop offset="1" stop-color="#6e6668"/></linearGradient>
<linearGradient id="uStripV" x1="0" y1="0" x2="0" y2="1"><stop offset="0" stop-color="#000" stop-opacity="0.22"/><stop offset="0.2" stop-color="#000" stop-opacity="0.04"/><stop offset="0.7" stop-color="#888" stop-opacity="0.1"/><stop offset="0.85" stop-color="#999" stop-opacity="0.35"/><stop offset="1" stop-color="#777" stop-opacity="0.45"/></linearGradient>
<linearGradient id="uBig" x1="0" y1="0" x2="1" y2="0.3"><stop offset="0" stop-color="#e6dadc"/><stop offset="0.3" stop-color="#f4e2e4"/><stop offset="0.6" stop-color="#fce5e5"/><stop offset="0.85" stop-color="#f8e2e3"/><stop offset="1" stop-color="#ebdcde"/></linearGradient>
<radialGradient id="uRing" cx="0.5" cy="0.5" r="0.5"><stop offset="0.45" stop-color="#c2b6b8"/><stop offset="0.7" stop-color="#cdc1c3"/><stop offset="1" stop-color="#d2c6c8"/></radialGradient>
<radialGradient id="uDia" cx="0.5" cy="0.5" r="0.5"><stop offset="0" stop-color="#e0c8cc"/><stop offset="0.6" stop-color="#f0dfe1"/><stop offset="1" stop-color="#e6d6d8"/></radialGradient>
<linearGradient id="uFrame" x1="0" y1="0" x2="0" y2="1"><stop offset="0" stop-color="#343233"/><stop offset="0.06" stop-color="#4a4849"/><stop offset="0.9" stop-color="#525051"/><stop offset="1" stop-color="#444243"/></linearGradient><filter id="sb"><feGaussianBlur stdDeviation="1.6"/></filter>
</defs><polygon points="621,127.3 634,127.3 642.5,135.8 642.5,148.5 634,157 621,157 612.5,148.5 612.5,135.8" fill="url(#uRing)" /><rect x="621.5" y="136.6" width="12" height="11.4" rx="1.6" fill="#000"/><polygon points="680.5,127.3 693.5,127.3 702,135.8 702,148.5 693.5,157 680.5,157 672,148.5 672,135.8" fill="url(#uRing)" /><rect x="681" y="136.6" width="12" height="11.4" rx="1.6" fill="#000"/><polygon points="747.5,127.3 760.5,127.3 769,135.8 769,148.5 760.5,157 747.5,157 739,148.5 739,135.8" fill="url(#uRing)" /><rect x="748" y="136.6" width="12" height="11.4" rx="1.6" fill="#000"/><polygon points="777.2,127.3 790.2,127.3 798.7,135.8 798.7,148.5 790.2,157 777.2,157 768.7,148.5 768.7,135.8" fill="url(#uRing)" /><rect x="777.7" y="136.6" width="12" height="11.4" rx="1.6" fill="#000"/><polygon points="619.8,157.2 820.2,157.2 827.2,164.2 827.2,287.8 820.2,294.8 619.8,294.8 612.8,287.8 612.8,164.2" fill="url(#uFrame)" /><rect x="620.8" y="164.4" width="199.6" height="123.2" fill="url(#uBig)"/><rect x="622.3" y="165.9" width="196.6" height="120.2" fill="none" stroke="#b4a8aa" stroke-width="3" opacity="0.55" filter="url(#sb)"/><rect x="622.5" y="168.5" width="22" height="22" rx="5" fill="#8a8082" opacity="0.55" filter="url(#sb)"/><rect x="625" y="171" width="17" height="16.8" rx="3.2" fill="#000"/><rect x="796.5" y="168.5" width="22" height="22" rx="5" fill="#8a8082" opacity="0.55" filter="url(#sb)"/><rect x="799" y="171" width="17" height="16.8" rx="3.2" fill="#000"/><rect x="622.5" y="262.1" width="22" height="22" rx="5" fill="#8a8082" opacity="0.55" filter="url(#sb)"/><rect x="625" y="264.6" width="17" height="16.8" rx="3.2" fill="#000"/><rect x="796.5" y="262.1" width="22" height="22" rx="5" fill="#8a8082" opacity="0.55" filter="url(#sb)"/><rect x="799" y="264.6" width="17" height="16.8" rx="3.2" fill="#000"/><polygon points="863.7,136 870.7,136 877.2,142.5 877.2,149.3 870.7,155.8 863.7,155.8 857.2,149.3 857.2,142.5" fill="url(#uDia)" /><polygon points="863.7,155.7 870.7,155.7 877.2,162.2 877.2,169 870.7,175.5 863.7,175.5 857.2,169 857.2,162.2" fill="url(#uDia)" /><polygon points="863.7,175.4 870.7,175.4 877.2,181.9 877.2,188.7 870.7,195.2 863.7,195.2 857.2,188.7 857.2,181.9" fill="url(#uDia)" /><polygon points="914.5,123.2 921.5,123.2 928,129.7 928,136.5 921.5,143 914.5,143 908,136.5 908,129.7" fill="url(#uDia)" /><g ><polygon points="885.8,143 897.5,143 903,148.5 903,210.5 897.5,216 885.8,216 880.3,210.5 880.3,148.5" fill="url(#uStrip)" /><polygon points="885.8,143 897.5,143 903,148.5 903,210.5 897.5,216 885.8,216 880.3,210.5 880.3,148.5" fill="url(#uStripV)" /></g><g ><polygon points="913.5,143 924.1,143 929.6,148.5 929.6,210.5 924.1,216 913.5,216 908,210.5 908,148.5" fill="url(#uStrip)" /><polygon points="913.5,143 924.1,143 929.6,148.5 929.6,210.5 924.1,216 913.5,216 908,210.5 908,148.5" fill="url(#uStripV)" /></g><g ><polygon points="984,143 994.5,143 1000,148.5 1000,210.5 994.5,216 984,216 978.5,210.5 978.5,148.5" fill="url(#uStrip)" /><polygon points="984,143 994.5,143 1000,148.5 1000,210.5 994.5,216 984,216 978.5,210.5 978.5,148.5" fill="url(#uStripV)" /></g><g ><polygon points="984,216 994.5,216 1000,221.5 1000,283.5 994.5,289 984,289 978.5,283.5 978.5,221.5" fill="url(#uStrip)" /><polygon points="984,216 994.5,216 1000,221.5 1000,283.5 994.5,289 984,289 978.5,283.5 978.5,221.5" fill="url(#uStripV)" /></g><polygon points="841.3,195.3 867,195.3 871,199.3 876.2,274.26 876.2,288.5 868.7,294 836,294 828.5,288.5 828.5,274.26 837.3,199.3" fill="url(#uLeg)" /><polygon points="841.3,195.3 867,195.3 871,199.3 876.2,274.26 876.2,288.5 868.7,294 836,294 828.5,288.5 828.5,274.26 837.3,199.3" fill="url(#uLegV)" /><polygon points="939.3,116 971.3,116 975.3,120 977.6,194.88 977.6,209.1 970.1,214.6 937.5,214.6 930,209.1 930,194.88 935.3,120" fill="url(#uLeg)" /><polygon points="939.3,116 971.3,116 975.3,120 977.6,194.88 977.6,209.1 970.1,214.6 937.5,214.6 930,209.1 930,194.88 935.3,120" fill="url(#uLegV)" /><polygon points="892.5,216.3 920.5,216.3 924.5,220.3 929,295.1 929,309.3 921.5,314.8 888.8,314.8 881.3,309.3 881.3,295.1 888.5,220.3" fill="url(#uLeg)" /><polygon points="892.5,216.3 920.5,216.3 924.5,220.3 929,295.1 929,309.3 921.5,314.8 888.8,314.8 881.3,309.3 881.3,295.1 888.5,220.3" fill="url(#uLegV)" /><polygon points="944,216.3 969.6,216.3 973.6,220.3 977.7,295.1 977.7,309.3 970.2,314.8 937.7,314.8 930.2,309.3 930.2,295.1 940,220.3" fill="url(#uLeg)" /><polygon points="944,216.3 969.6,216.3 973.6,220.3 977.7,295.1 977.7,309.3 970.2,314.8 937.7,314.8 930.2,309.3 930.2,295.1 940,220.3" fill="url(#uLegV)" /><polygon points="620.2,302.3 734,302.3 741.5,309.8 741.5,507.3 734,514.8 620.2,514.8 612.7,507.3 612.7,309.8" fill="#e6dadc" /><rect x="621.2" y="311.8" width="116.8" height="194" rx="3" fill="#000"/><path d="M617 306.8 H737 M617 510.6 H737 M617 306.8 V510.6" stroke="#f2e8ea" stroke-width="2.5" fill="none" opacity="0.7"/><polygon points="745.6,294.8 867,294.8 881,309.4 881,509.3 867.2,522.9 748,522.9 738.8,511 738.8,303" fill="#ffe6e5" /><rect x="745.5" y="303" width="129.5" height="212" fill="none" stroke="#f6dcdc" stroke-width="1.2" opacity="0.8"/></svg>
<div style="left:0px;top:627.3px;width:1027px;height:1.2px;background:#222;"></div>
<svg class="a" style="left:0px;top:637px;" width="10.5" height="10.5" viewBox="0 0 10.5 10.5"><line x1="0" y1="0" x2="10.5" y2="10.5" stroke="#6a6a6a" stroke-width="1.1"/><line x1="0" y1="3.3" x2="7.2" y2="10.5" stroke="#6a6a6a" stroke-width="1.1"/><line x1="0" y1="6.6" x2="3.9" y2="10.5" stroke="#6a6a6a" stroke-width="1.1"/></svg>
<div class="btn" style="left:8.7px;top:629.5px;width:22px;height:15.3px;"></div>
<svg class="a" style="left:12.3px;top:631.5px;" width="11" height="11" viewBox="0 0 11 11"><path d="M1 3 L5.5 1 L10 3 L10 8 L5.5 10.2 L1 8 Z" fill="#d8d8d8"/><path d="M1 3 L5.5 5 L10 3 L5.5 1 Z" fill="#fff"/><path d="M5.5 5 L10 3 L10 8 L5.5 10.2 Z" fill="#a9a9a9"/></svg>
<svg class="a" style="left:25px;top:633.1px;" width="4" height="9" viewBox="0 0 4 9"><path d="M0 3.4 L2 0.6 L4 3.4 Z M0 5.6 L2 8.4 L4 5.6 Z" fill="#3a3a3a"/></svg>
<span class="t" style="left:41.20px;top:632px;font-size:8.70px;color:#d6d6d6;">View</span>
<span class="t" style="left:75.50px;top:632px;font-size:8.70px;color:#d6d6d6;transform:scaleX(1.013);transform-origin:left center;">Select</span>
<span class="t" style="left:115.00px;top:632px;font-size:8.70px;color:#d6d6d6;transform:scaleX(0.969);transform-origin:left center;">Add</span>
<span class="t" style="left:145.50px;top:632px;font-size:8.70px;color:#d6d6d6;transform:scaleX(1.014);transform-origin:left center;">Object</span>
<div class="btn" style="left:181px;top:629.5px;width:87px;height:15.3px;"></div>
<svg class="a" style="left:186px;top:632px;" width="10" height="10.5" viewBox="0 0 10 10.5"><path d="M0.5 2.8 L5 0.6 L9.5 2.8 L9.5 7.6 L5 10 L0.5 7.6 Z" fill="#e9973a"/><path d="M0.5 2.8 L5 5 L9.5 2.8 L5 0.6 Z" fill="#f6c27a"/><path d="M5 5 L9.5 2.8 L9.5 7.6 L5 10 Z" fill="#c8741c"/></svg>
<span class="t" style="left:200.00px;top:632px;font-size:8.70px;color:#e8e8e8;">Object Mode</span>
<svg class="a" style="left:262.5px;top:633.1px;" width="4" height="9" viewBox="0 0 4 9"><path d="M0 3.4 L2 0.6 L4 3.4 Z M0 5.6 L2 8.4 L4 5.6 Z" fill="#3a3a3a"/></svg>
<div class="btn" style="left:272.5px;top:629.5px;width:27px;height:15.3px;"></div>
<svg class="a" style="left:277px;top:632px;" width="10.5" height="10.5" viewBox="0 0 10.5 10.5"><circle cx="5.2" cy="5.2" r="5" fill="#f4f4f4"/></svg>
<svg class="a" style="left:292.5px;top:633.1px;" width="4" height="9" viewBox="0 0 4 9"><path d="M0 3.4 L2 0.6 L4 3.4 Z M0 5.6 L2 8.4 L4 5.6 Z" fill="#3a3a3a"/></svg>
<div class="btn" style="left:303.7px;top:629.5px;width:42px;height:15.3px;"></div>
<svg class="a" style="left:307px;top:631.2px;" width="13" height="13" viewBox="0 0 13 13"><circle cx="4.4" cy="4.2" r="2.9" fill="#dfe6f2" stroke="#6f93d6" stroke-width="1.1"/><circle cx="8" cy="8.4" r="2.9" fill="#f2f4f8" stroke="#9fb6de" stroke-width="1.1"/></svg>
<svg class="a" style="left:323px;top:633.1px;" width="4" height="9" viewBox="0 0 4 9"><path d="M0 3.4 L2 0.6 L4 3.4 Z M0 5.6 L2 8.4 L4 5.6 Z" fill="#3a3a3a"/></svg>
<div style="left:329.3px;top:630.5px;width:1px;height:13.3px;background:#2a2a2a;"></div>
<svg class="a" style="left:331.2px;top:631.8px;" width="13" height="12" viewBox="0 0 13 12"><rect x="1" y="0.6" width="2" height="1.8" fill="#7ea1e6"/><rect x="5.5" y="0.6" width="2" height="1.8" fill="#7ea1e6"/><rect x="10" y="0.6" width="2" height="1.8" fill="#7ea1e6"/><path d="M0.5 7.4 L3.6 4.6 L3.6 6.4 L9.4 6.4 L9.4 4.6 L12.5 7.4 L9.4 10.2 L9.4 8.4 L3.6 8.4 L3.6 10.2 Z" fill="#fff"/></svg>
<div class="btn" style="left:350px;top:629.5px;width:117.5px;height:15.3px;"></div>
<div style="left:350.8px;top:630.3px;width:30px;height:13.7px;background:linear-gradient(#2b3c70,#1c2950);border-radius:2px 0 0 2px;"></div>
<div style="left:365.3px;top:630.5px;width:1px;height:13.3px;background:#1a2140;"></div>
<div style="left:380.8px;top:630.5px;width:1px;height:13.3px;background:#2a2a2a;"></div>
<div style="left:396px;top:630.5px;width:1px;height:13.3px;background:#2a2a2a;"></div>
<div style="left:411.2px;top:630.5px;width:1px;height:13.3px;background:#2a2a2a;"></div>
<svg class="a" style="left:352px;top:631px;" width="13" height="13" viewBox="0 0 13 13"><path d="M6.5 7.5 L6.5 0.8" stroke="#3c6ff0" stroke-width="1.6"/><path d="M6.5 7.5 L1 11.5" stroke="#e03030" stroke-width="1.8"/><path d="M6.5 7.5 L12 11.5" stroke="#3fd03f" stroke-width="1.8"/></svg>
<svg class="a" style="left:367px;top:631px;" width="13" height="13" viewBox="0 0 13 13"><path d="M1.5 11.5 L8.5 4.5" stroke="#7fa6f0" stroke-width="2.2"/><path d="M5.5 2 L11.5 1.5 L11 7.5 Z" fill="#7fa6f0"/></svg>
<svg class="a" style="left:382.5px;top:631px;" width="13" height="13" viewBox="0 0 13 13"><path d="M2 12 C2 6 5.5 2.5 11.5 2.2" stroke="#4c6aa8" stroke-width="2" fill="none"/></svg>
<svg class="a" style="left:397.5px;top:631px;" width="13" height="13" viewBox="0 0 13 13"><path d="M1.8 11.2 L7.5 5.5" stroke="#5570ae" stroke-width="1.8"/><rect x="6.8" y="2" width="4.6" height="4.6" fill="#5a76b6"/></svg>
<span class="t" style="left:418.00px;top:632px;font-size:8.70px;color:#e4e4e4;transform:scaleX(0.974);transform-origin:left center;">Global</span>
<svg class="a" style="left:461.5px;top:633.1px;" width="4" height="9" viewBox="0 0 4 9"><path d="M0 3.4 L2 0.6 L4 3.4 Z M0 5.6 L2 8.4 L4 5.6 Z" fill="#3a3a3a"/></svg>
<div style="left:472px;top:629.5px;width:38.6px;height:15.5px;background:#0d0d0d;border:1px solid #2c2c2c;border-radius:3px;"></div>
<div style="left:479.72px;top:630.5px;width:1px;height:13.5px;background:#262626;"></div>
<div style="left:487.44px;top:630.5px;width:1px;height:13.5px;background:#262626;"></div>
<div style="left:495.16px;top:630.5px;width:1px;height:13.5px;background:#262626;"></div>
<div style="left:502.88px;top:630.5px;width:1px;height:13.5px;background:#262626;"></div>
<div style="left:473px;top:637px;width:36.6px;height:1px;background:#262626;"></div>
<div style="left:515px;top:629.5px;width:38.6px;height:15.5px;background:#0d0d0d;border:1px solid #2c2c2c;border-radius:3px;"></div>
<div style="left:522.72px;top:630.5px;width:1px;height:13.5px;background:#262626;"></div>
<div style="left:530.44px;top:630.5px;width:1px;height:13.5px;background:#262626;"></div>
<div style="left:538.16px;top:630.5px;width:1px;height:13.5px;background:#262626;"></div>
<div style="left:545.88px;top:630.5px;width:1px;height:13.5px;background:#262626;"></div>
<div style="left:516px;top:637px;width:36.6px;height:1px;background:#262626;"></div>
<svg class="a" style="left:474.2px;top:631.3px;" width="4" height="4" viewBox="0 0 4 4"><circle cx="2" cy="2" r="1.7" fill="#f0c9a0"/></svg>
<div class="btn" style="left:558.7px;top:629.5px;width:8.3px;height:15.3px;border-radius:3px 0 0 3px;border-right:none;"></div>
<svg class="a" style="left:560.5px;top:631.5px;" width="6.5" height="11" viewBox="0 0 6.5 11"><rect x="0.3" y="0.3" width="7" height="9.6" rx="1" fill="#e6ebf5" stroke="#9bb3e0" stroke-width="0.8"/></svg>
<div style="left:566.6px;top:35px;width:1.3px;height:612px;background:#2e2e2e;"></div>
<svg class="a" style="left:556.5px;top:34.5px;" width="10" height="10" viewBox="0 0 10 10"><line x1="0" y1="0" x2="10" y2="10" stroke="#707070" stroke-width="1.1"/><line x1="3.3" y1="0" x2="10" y2="6.7" stroke="#707070" stroke-width="1.1"/><line x1="6.6" y1="0" x2="10" y2="3.4" stroke="#707070" stroke-width="1.1"/></svg>
<svg class="a" style="left:567.8px;top:638.5px;" width="8.5" height="8.5" viewBox="0 0 8.5 8.5"><line x1="0" y1="0" x2="8.5" y2="8.5" stroke="#6a6a6a" stroke-width="1.1"/><line x1="0" y1="3.3" x2="5.2" y2="8.5" stroke="#6a6a6a" stroke-width="1.1"/><line x1="0" y1="6.6" x2="1.9" y2="8.5" stroke="#6a6a6a" stroke-width="1.1"/></svg>
<svg class="a" style="left:557.5px;top:53.8px;" width="5" height="5" viewBox="0 0 5 5"><path d="M2.5 0.6 V4.4 M0.6 2.5 H4.4" stroke="#777" stroke-width="1.3" fill="none"/></svg>
<svg class="a" style="left:569.2px;top:53.8px;" width="5" height="5" viewBox="0 0 5 5"><path d="M2.5 0.6 V4.4 M0.6 2.5 H4.4" stroke="#777" stroke-width="1.3" fill="none"/></svg>
<div class="btn" style="left:573.8px;top:629.5px;width:22.5px;height:15.3px;"></div>
<svg class="a" style="left:577.3px;top:632px;" width="11" height="10.5" viewBox="0 0 11 10.5"><rect x="0" y="0" width="11" height="10.5" rx="1" fill="#f2ecec"/><rect x="0" y="2.6" width="11" height="3.4" fill="#d9606a"/><rect x="0" y="6" width="11" height="1.6" fill="#5a5a7a"/></svg>
<svg class="a" style="left:590.5px;top:633.1px;" width="4" height="9" viewBox="0 0 4 9"><path d="M0 3.4 L2 0.6 L4 3.4 Z M0 5.6 L2 8.4 L4 5.6 Z" fill="#3a3a3a"/></svg>
<span class="t" style="left:606.00px;top:632px;font-size:8.70px;color:#d6d6d6;transform:scaleX(1.059);transform-origin:left center;">View</span>
<span class="t" style="left:640.80px;top:632px;font-size:8.70px;color:#d6d6d6;transform:scaleX(1.016);transform-origin:left center;">Image*</span>
<div class="fld" style="left:679.2px;top:629.5px;width:178.4px;height:15.3px;"></div>
<svg class="a" style="left:683px;top:631.8px;" width="10" height="11" viewBox="0 0 10 11"><path d="M0.5 0.5 H7 L9.5 3 V10.5 H0.5 Z" fill="#efeaf2"/><rect x="0.5" y="4" width="9" height="2.6" fill="#d9606a"/><rect x="0.5" y="6.6" width="9" height="1.5" fill="#6a6aa0"/></svg>
<svg class="a" style="left:696.5px;top:633.1px;" width="4" height="9" viewBox="0 0 4 9"><path d="M0 3.4 L2 0.6 L4 3.4 Z M0 5.6 L2 8.4 L4 5.6 Z" fill="#3a3a3a"/></svg>
<div style="left:702.8px;top:630.5px;width:1px;height:13.3px;background:#2a2a2a;"></div>
<span class="t" style="left:709.50px;top:632px;font-size:8.70px;color:#f4f4f4;transform:scaleX(0.939);transform-origin:left center;">AO</span>
<div style="left:797px;top:630.5px;width:1px;height:13.3px;background:#2a2a2a;"></div>
<span class="t" style="left:802.20px;top:632px;font-size:8.80px;color:#e0e0e0;">F</span>
<div style="left:811.8px;top:630.5px;width:1px;height:13.3px;background:#2a2a2a;"></div>
<svg class="a" style="left:815.45px;top:632.85px;" width="9.5" height="9.5" viewBox="0 0 9.5 9.5"><path d="M4.75 0.6 V8.9 M0.6 4.75 H8.9" stroke="#fff" stroke-width="2.0" fill="none"/></svg>
<div style="left:828.2px;top:630.5px;width:1px;height:13.3px;background:#2a2a2a;"></div>
<svg class="a" style="left:830.5px;top:631.8px;" width="11" height="11" viewBox="0 0 11 11"><path d="M0.5 3.5 H4.2 V1 H10.5 V6 H10.5 V10.2 H0.5 Z" fill="#efe7a3"/><path d="M0.5 5.6 H10.5 V10.2 H0.5 Z" fill="#e6dc86"/></svg>
<div style="left:843px;top:630.5px;width:1px;height:13.3px;background:#2a2a2a;"></div>
<svg class="a" style="left:846.15px;top:633.35px;" width="8.5" height="8.5" viewBox="0 0 8.5 8.5"><path d="M1 1 L7.5 7.5 M7.5 1 L1 7.5" stroke="#fff" stroke-width="2.0" fill="none"/></svg>
<div class="btn" style="left:863px;top:629.5px;width:15.3px;height:15.3px;"></div>
<svg class="a" style="left:865px;top:631.7px;" width="11.5" height="11.5" viewBox="0 0 11.5 11.5"><path d="M0.8 10.8 L4.6 7" stroke="#fff" stroke-width="1.5"/><path d="M2.4 4.6 L7 9.2 L8 6.6 L10.8 4 L7.6 0.8 L5 3.6 Z" fill="#fff"/></svg>
<div class="btn" style="left:882.5px;top:629.5px;width:50.5px;height:15.3px;"></div>
<svg class="a" style="left:887px;top:631.8px;" width="10" height="11" viewBox="0 0 10 11"><path d="M0.5 0.5 H7 L9.5 3 V10.5 H0.5 Z" fill="#efeaf2"/><rect x="0.5" y="4" width="9" height="2.6" fill="#d9606a"/><rect x="0.5" y="6.6" width="9" height="1.5" fill="#6a6aa0"/></svg>
<span class="t" style="left:901.00px;top:632px;font-size:8.70px;color:#dedede;transform:scaleX(1.016);transform-origin:left center;">View</span>
<svg class="a" style="left:927.3px;top:633.1px;" width="4" height="9" viewBox="0 0 4 9"><path d="M0 3.4 L2 0.6 L4 3.4 Z M0 5.6 L2 8.4 L4 5.6 Z" fill="#3a3a3a"/></svg>
<div class="btn" style="left:941.8px;top:629.5px;width:45.4px;height:15.3px;"></div>
<div style="left:942.6px;top:630.3px;width:14.6px;height:13.7px;background:linear-gradient(#2b3c70,#1c2950);border-radius:2px 0 0 2px;"></div>
<div style="left:957.2px;top:630.5px;width:1px;height:13.3px;background:#2a2a2a;"></div>
<div style="left:972.2px;top:630.5px;width:1px;height:13.3px;background:#2a2a2a;"></div>
<svg class="a" style="left:945.2px;top:632.6px;" width="9.6" height="9.6" viewBox="0 0 11 11"><path d="M0 0 H11 V11 H0 Z" fill="#d8d2c6"/><path d="M0 0 L6 0 L0 6 Z" fill="#c83c4a"/><path d="M11 11 L4 11 L11 4 Z" fill="#3a4a8a"/><path d="M0 11 L11 0" stroke="#fff" stroke-width="1"/></svg>
<svg class="a" style="left:960.2px;top:632.6px;" width="9.6" height="9.6" viewBox="0 0 11 11"><rect x="0" y="0" width="2.75" height="2.75" fill="#c8404a"/><rect x="2.75" y="0" width="2.75" height="2.75" fill="#f1eaea"/><rect x="5.5" y="0" width="2.75" height="2.75" fill="#c8404a"/><rect x="8.25" y="0" width="2.75" height="2.75" fill="#f1eaea"/><rect x="0" y="2.75" width="2.75" height="2.75" fill="#f1eaea"/><rect x="2.75" y="2.75" width="2.75" height="2.75" fill="#c8404a"/><rect x="5.5" y="2.75" width="2.75" height="2.75" fill="#f1eaea"/><rect x="8.25" y="2.75" width="2.75" height="2.75" fill="#c8404a"/><rect x="0" y="5.5" width="2.75" height="2.75" fill="#c8404a"/><rect x="2.75" y="5.5" width="2.75" height="2.75" fill="#f1eaea"/><rect x="5.5" y="5.5" width="2.75" height="2.75" fill="#c8404a"/><rect x="8.25" y="5.5" width="2.75" height="2.75" fill="#f1eaea"/><rect x="0" y="8.25" width="2.75" height="2.75" fill="#f1eaea"/><rect x="2.75" y="8.25" width="2.75" height="2.75" fill="#c8404a"/><rect x="5.5" y="8.25" width="2.75" height="2.75" fill="#f1eaea"/><rect x="8.25" y="8.25" width="2.75" height="2.75" fill="#c8404a"/></svg>
<svg class="a" style="left:975.2px;top:632.6px;" width="9.6" height="9.6" viewBox="0 0 11 11"><path d="M0 0 H11 V11 H0 Z" fill="#444"/><path d="M11 0 L11 11 L0 11 Z" fill="#b4b4b4"/></svg>
<div style="left:0px;top:646.6px;width:1027px;height:1.2px;background:#1c1c1c;"></div>
<svg class="a" style="left:0px;top:647.8px;" width="1027" height="30" viewBox="0 0 1027 30"><rect x="9.47" y="0" width="1.2" height="29.5" fill="#4a4a4a"/><rect x="24.50" y="0" width="1.2" height="29.5" fill="#4a4a4a"/><rect x="39.53" y="0" width="1.2" height="29.5" fill="#4a4a4a"/><rect x="54.56" y="0" width="1.2" height="29.5" fill="#4a4a4a"/><rect x="69.59" y="0" width="1.2" height="29.5" fill="#4a4a4a"/><rect x="84.62" y="0" width="1.2" height="29.5" fill="#4a4a4a"/><rect x="99.65" y="0" width="1.2" height="29.5" fill="#4a4a4a"/><rect x="114.68" y="0" width="1.2" height="29.5" fill="#4a4a4a"/><rect x="129.71" y="0" width="1.2" height="29.5" fill="#4a4a4a"/><rect x="144.74" y="0" width="1.2" height="29.5" fill="#4a4a4a"/><rect x="159.77" y="0" width="1.2" height="29.5" fill="#4a4a4a"/><rect x="174.80" y="0" width="1.2" height="29.5" fill="#4a4a4a"/><rect x="189.83" y="0" width="1.2" height="29.5" fill="#4a4a4a"/><rect x="204.86" y="0" width="1.2" height="29.5" fill="#4a4a4a"/><rect x="219.89" y="0" width="1.2" height="29.5" fill="#4a4a4a"/><rect x="234.92" y="0" width="1.2" height="29.5" fill="#4a4a4a"/><rect x="249.95" y="0" width="1.2" height="29.5" fill="#4a4a4a"/><rect x="264.98" y="0" width="1.2" height="29.5" fill="#4a4a4a"/><rect x="280.01" y="0" width="1.2" height="29.5" fill="#4a4a4a"/><rect x="295.04" y="0" width="1.2" height="29.5" fill="#4a4a4a"/><rect x="310.07" y="0" width="1.2" height="29.5" fill="#4a4a4a"/><rect x="325.10" y="0" width="1.2" height="29.5" fill="#4a4a4a"/><rect x="340.13" y="0" width="1.2" height="29.5" fill="#4a4a4a"/><rect x="355.16" y="0" width="1.2" height="29.5" fill="#4a4a4a"/><rect x="370.19" y="0" width="1.2" height="29.5" fill="#4a4a4a"/><rect x="385.22" y="0" width="1.2" height="29.5" fill="#4a4a4a"/><rect x="400.25" y="0" width="1.2" height="29.5" fill="#4a4a4a"/><rect x="415.28" y="0" width="1.2" height="29.5" fill="#4a4a4a"/><rect x="430.31" y="0" width="1.2" height="29.5" fill="#4a4a4a"/><rect x="445.34" y="0" width="1.2" height="29.5" fill="#4a4a4a"/><rect x="460.37" y="0" width="1.2" height="29.5" fill="#4a4a4a"/><rect x="475.40" y="0" width="1.2" height="29.5" fill="#4a4a4a"/><rect x="490.43" y="0" width="1.2" height="29.5" fill="#4a4a4a"/><rect x="505.46" y="0" width="1.2" height="29.5" fill="#4a4a4a"/><rect x="520.49" y="0" width="1.2" height="29.5" fill="#4a4a4a"/><rect x="535.52" y="0" width="1.2" height="29.5" fill="#4a4a4a"/><rect x="550.55" y="0" width="1.2" height="29.5" fill="#4a4a4a"/><rect x="565.58" y="0" width="1.2" height="29.5" fill="#4a4a4a"/><rect x="580.61" y="0" width="1.2" height="29.5" fill="#4a4a4a"/><rect x="595.64" y="0" width="1.2" height="29.5" fill="#4a4a4a"/><rect x="610.67" y="0" width="1.2" height="29.5" fill="#4a4a4a"/><rect x="625.70" y="0" width="1.2" height="29.5" fill="#4a4a4a"/><rect x="640.73" y="0" width="1.2" height="29.5" fill="#4a4a4a"/><rect x="655.76" y="0" width="1.2" height="29.5" fill="#4a4a4a"/><rect x="670.79" y="0" width="1.2" height="29.5" fill="#4a4a4a"/><rect x="685.82" y="0" width="1.2" height="29.5" fill="#4a4a4a"/><rect x="700.85" y="0" width="1.2" height="29.5" fill="#4a4a4a"/><rect x="715.88" y="0" width="1.2" height="29.5" fill="#4a4a4a"/><rect x="730.91" y="0" width="1.2" height="29.5" fill="#4a4a4a"/><rect x="745.94" y="0" width="1.2" height="29.5" fill="#4a4a4a"/><rect x="760.97" y="0" width="1.2" height="29.5" fill="#4a4a4a"/><rect x="776.00" y="0" width="1.2" height="29.5" fill="#4a4a4a"/><rect x="791.03" y="0" width="1.2" height="29.5" fill="#4a4a4a"/><rect x="806.06" y="0" width="1.2" height="29.5" fill="#4a4a4a"/><rect x="821.09" y="0" width="1.2" height="29.5" fill="#4a4a4a"/><rect x="836.12" y="0" width="1.2" height="29.5" fill="#4a4a4a"/><rect x="851.15" y="0" width="1.2" height="29.5" fill="#4a4a4a"/><rect x="866.18" y="0" width="1.2" height="29.5" fill="#4a4a4a"/><rect x="881.21" y="0" width="1.2" height="29.5" fill="#4a4a4a"/><rect x="896.24" y="0" width="1.2" height="29.5" fill="#4a4a4a"/><rect x="911.27" y="0" width="1.2" height="29.5" fill="#4a4a4a"/><rect x="941.33" y="0" width="1.2" height="29.5" fill="#4a4a4a"/><rect x="956.36" y="0" width="1.2" height="29.5" fill="#4a4a4a"/><rect x="971.39" y="0" width="1.2" height="29.5" fill="#4a4a4a"/><rect x="986.42" y="0" width="1.2" height="29.5" fill="#4a4a4a"/><rect x="1001.45" y="0" width="1.2" height="29.5" fill="#4a4a4a"/><rect x="1016.48" y="0" width="1.2" height="29.5" fill="#4a4a4a"/><rect x="174.5" y="0" width="1.9" height="29.5" fill="#5aa040"/></svg>
<div style="left:4px;top:678.6px;width:1017.5px;height:11.6px;background:linear-gradient(#2c2c2c,#1b1b1b);border-radius:6px;border:1px solid #0c0c0c;"></div>
<span class="t" style="left:20.02px;top:679px;font-size:8.90px;color:#f6f6f6;">-50</span>
<span class="t" style="left:49.83px;top:679px;font-size:8.90px;color:#f6f6f6;">-40</span>
<span class="t" style="left:79.64px;top:679px;font-size:8.90px;color:#f6f6f6;">-30</span>
<span class="t" style="left:109.45px;top:679px;font-size:8.90px;color:#f6f6f6;">-20</span>
<span class="t" style="left:139.26px;top:679px;font-size:8.90px;color:#f6f6f6;">-10</span>
<span class="t" style="left:174.03px;top:679px;font-size:8.90px;color:#f6f6f6;">0</span>
<span class="t" style="left:201.36px;top:679px;font-size:8.90px;color:#f6f6f6;">10</span>
<span class="t" style="left:231.17px;top:679px;font-size:8.90px;color:#f6f6f6;">20</span>
<span class="t" style="left:260.98px;top:679px;font-size:8.90px;color:#f6f6f6;">30</span>
<span class="t" style="left:290.79px;top:679px;font-size:8.90px;color:#f6f6f6;">40</span>
<span class="t" style="left:320.60px;top:679px;font-size:8.90px;color:#f6f6f6;">50</span>
<span class="t" style="left:350.41px;top:679px;font-size:8.90px;color:#f6f6f6;">60</span>
<span class="t" style="left:380.22px;top:679px;font-size:8.90px;color:#f6f6f6;">70</span>
<span class="t" style="left:410.03px;top:679px;font-size:8.90px;color:#f6f6f6;">80</span>
<span class="t" style="left:439.84px;top:679px;font-size:8.90px;color:#f6f6f6;">90</span>
<span class="t" style="left:467.18px;top:679px;font-size:8.90px;color:#f6f6f6;">100</span>
<span class="t" style="left:497.32px;top:679px;font-size:8.90px;color:#f6f6f6;">110</span>
<span class="t" style="left:526.80px;top:679px;font-size:8.90px;color:#f6f6f6;">120</span>
<span class="t" style="left:556.61px;top:679px;font-size:8.90px;color:#f6f6f6;">130</span>
<span class="t" style="left:586.42px;top:679px;font-size:8.90px;color:#f6f6f6;">140</span>
<span class="t" style="left:616.23px;top:679px;font-size:8.90px;color:#f6f6f6;">150</span>
<span class="t" style="left:646.04px;top:679px;font-size:8.90px;color:#f6f6f6;">160</span>
<span class="t" style="left:675.85px;top:679px;font-size:8.90px;color:#f6f6f6;">170</span>
<span class="t" style="left:705.66px;top:679px;font-size:8.90px;color:#f6f6f6;">180</span>
<span class="t" style="left:735.47px;top:679px;font-size:8.90px;color:#f6f6f6;">190</span>
<span class="t" style="left:765.28px;top:679px;font-size:8.90px;color:#f6f6f6;">200</span>
<span class="t" style="left:795.09px;top:679px;font-size:8.90px;color:#f6f6f6;">210</span>
<span class="t" style="left:824.90px;top:679px;font-size:8.90px;color:#f6f6f6;">220</span>
<span class="t" style="left:854.71px;top:679px;font-size:8.90px;color:#f6f6f6;">230</span>
<span class="t" style="left:884.52px;top:679px;font-size:8.90px;color:#f6f6f6;">240</span>
<span class="t" style="left:914.33px;top:679px;font-size:8.90px;color:#f6f6f6;">250</span>
<span class="t" style="left:944.14px;top:679px;font-size:8.90px;color:#f6f6f6;">260</span>
<span class="t" style="left:973.95px;top:679px;font-size:8.90px;color:#f6f6f6;">270</span>
<span class="t" style="left:1003.76px;top:679px;font-size:8.90px;color:#f6f6f6;">280</span>
<svg class="a" style="left:1016px;top:648.5px;" width="10" height="10" viewBox="0 0 10 10"><line x1="0" y1="0" x2="10" y2="10" stroke="#6a6a6a" stroke-width="1.1"/><line x1="3.3" y1="0" x2="10" y2="6.7" stroke="#6a6a6a" stroke-width="1.1"/><line x1="6.6" y1="0" x2="10" y2="3.4" stroke="#6a6a6a" stroke-width="1.1"/></svg>
<div style="left:0px;top:692.4px;width:1027px;height:1.1px;background:#1e1e1e;"></div>
<svg class="a" style="left:0px;top:702.5px;" width="10.5" height="10.5" viewBox="0 0 10.5 10.5"><line x1="0" y1="0" x2="10.5" y2="10.5" stroke="#6a6a6a" stroke-width="1.1"/><line x1="0" y1="3.3" x2="7.2" y2="10.5" stroke="#6a6a6a" stroke-width="1.1"/><line x1="0" y1="6.6" x2="3.9" y2="10.5" stroke="#6a6a6a" stroke-width="1.1"/></svg>
<div class="btn" style="left:8.7px;top:694.3px;width:22px;height:15.5px;"></div>
<svg class="a" style="left:12.2px;top:697px;" width="10.5" height="10.5" viewBox="0 0 10.5 10.5"><circle cx="5.2" cy="5.2" r="4.9" fill="#f2f0ee"/><path d="M5.2 5.2 L5.2 1.8 M5.2 5.2 L2.8 6.6" stroke="#c05a5a" stroke-width="1.1" fill="none"/></svg>
<svg class="a" style="left:25px;top:698.1px;" width="4" height="9" viewBox="0 0 4 9"><path d="M0 3.4 L2 0.6 L4 3.4 Z M0 5.6 L2 8.4 L4 5.6 Z" fill="#3a3a3a"/></svg>
<span class="t" style="left:41.20px;top:697px;font-size:8.70px;color:#d6d6d6;">View</span>
<span class="t" style="left:75.50px;top:697px;font-size:8.70px;color:#d6d6d6;">Marker</span>
<span class="t" style="left:118.00px;top:697px;font-size:8.70px;color:#d6d6d6;">Frame</span>
<span class="t" style="left:158.80px;top:697px;font-size:8.70px;color:#d6d6d6;">Playback</span>
<div class="btn" style="left:203px;top:694.3px;width:31.5px;height:15.5px;"></div>
<div style="left:218.5px;top:695.3px;width:1px;height:13.5px;background:#2a2a2a;"></div>
<svg class="a" style="left:205.8px;top:697px;" width="10.5" height="10.5" viewBox="0 0 10.5 10.5"><circle cx="5.2" cy="5.2" r="4.9" fill="#f4f0ea"/><path d="M5.2 5.2 L5.2 0.3 A4.9 4.9 0 0 1 10.1 5.2 Z" fill="#e8a23a"/><path d="M5.2 5.2 H10.1" stroke="#7a5a2a" stroke-width="0.8"/></svg>
<svg class="a" style="left:222px;top:696.3px;" width="9" height="11.5" viewBox="0 0 9 11.5"><path d="M2.2 5 V3.4 A2.3 2.3 0 0 1 6.8 3.4 V5" stroke="#f2f2f2" stroke-width="1.5" fill="none"/><rect x="0.6" y="5" width="7.8" height="6" rx="0.8" fill="#f2f2f2"/></svg>
<div class="num" style="left:239.5px;top:694.3px;width:175px;height:15.5px;"></div>
<div class="nob" style="left:239.5px;top:694.3px;width:88.5px;height:15.5px;"></div>
<svg class="a" style="left:244px;top:700.45px;" width="3" height="5" viewBox="0 0 3 5"><path d="M3 0 L0.4 2.5 L3 5 Z" fill="#343434"/></svg>
<svg class="a" style="left:320.5px;top:700.45px;" width="3" height="5" viewBox="0 0 3 5"><path d="M0 0 L2.6 2.5 L0 5 Z" fill="#343434"/></svg>
<span class="t" style="left:250.80px;top:697px;font-size:8.70px;color:#dcdcdc;transform:scaleX(1.025);transform-origin:left center;">Start:</span>
<span class="t" style="right:963.70px;top:697px;font-size:8.90px;color:#dcdcdc;">1</span>
<div class="nob" style="left:328px;top:694.3px;width:86.5px;height:15.5px;"></div>
<svg class="a" style="left:332.5px;top:700.45px;" width="3" height="5" viewBox="0 0 3 5"><path d="M3 0 L0.4 2.5 L3 5 Z" fill="#343434"/></svg>
<svg class="a" style="left:407px;top:700.45px;" width="3" height="5" viewBox="0 0 3 5"><path d="M0 0 L2.6 2.5 L0 5 Z" fill="#343434"/></svg>
<span class="t" style="left:341.20px;top:697px;font-size:8.70px;color:#dcdcdc;transform:scaleX(0.883);transform-origin:left center;">End:</span>
<span class="t" style="right:877.20px;top:697px;font-size:8.90px;color:#dcdcdc;">250</span>
<div style="left:327.5px;top:695.3px;width:1px;height:13.5px;background:#2a2a2a;"></div>
<div class="num" style="left:420px;top:694.3px;width:68px;height:15.5px;"></div>
<svg class="a" style="left:424.5px;top:700.45px;" width="3" height="5" viewBox="0 0 3 5"><path d="M3 0 L0.4 2.5 L3 5 Z" fill="#343434"/></svg>
<svg class="a" style="left:480.5px;top:700.45px;" width="3" height="5" viewBox="0 0 3 5"><path d="M0 0 L2.6 2.5 L0 5 Z" fill="#343434"/></svg>
<span class="t" style="right:803.50px;top:697px;font-size:8.90px;color:#dcdcdc;">0</span>
<div class="btn" style="left:502px;top:694.3px;width:93px;height:15.5px;"></div>
<div style="left:517px;top:695.3px;width:1px;height:13.5px;background:#282828;"></div>
<div style="left:532.5px;top:695.3px;width:1px;height:13.5px;background:#282828;"></div>
<div style="left:547.5px;top:695.3px;width:1px;height:13.5px;background:#282828;"></div>
<div style="left:563px;top:695.3px;width:1px;height:13.5px;background:#282828;"></div>
<div style="left:578.5px;top:695.3px;width:1px;height:13.5px;background:#282828;"></div>
<svg class="a" style="left:503.8px;top:698px;" width="11" height="8.5" viewBox="0 0 11 8.5"><rect x="0" y="0.5" width="1.6" height="7.5" fill="#d9d9d9"/><path d="M6 0.5 L1.8 4.25 L6 8 Z M10.4 0.5 L6.2 4.25 L10.4 8 Z" fill="#d9d9d9"/></svg>
<svg class="a" style="left:519px;top:698px;" width="10" height="8.5" viewBox="0 0 10 8.5"><path d="M4.8 0.5 L0.4 4.25 L4.8 8 Z M9.6 0.5 L5.2 4.25 L9.6 8 Z" fill="#d9d9d9"/></svg>
<svg class="a" style="left:535px;top:697px;" width="9" height="10.5" viewBox="0 0 9 10.5"><path d="M8.6 0.4 L0.4 5.2 L8.6 10 Z" fill="#c4c4c4"/></svg>
<svg class="a" style="left:551px;top:697px;" width="9" height="10.5" viewBox="0 0 9 10.5"><path d="M0.4 0.4 L8.6 5.2 L0.4 10 Z" fill="#f4f4f4"/></svg>
<svg class="a" style="left:566.3px;top:698px;" width="10" height="8.5" viewBox="0 0 10 8.5"><path d="M0.4 0.5 L4.8 4.25 L0.4 8 Z M5.2 0.5 L9.6 4.25 L5.2 8 Z" fill="#d9d9d9"/></svg>
<svg class="a" style="left:581px;top:698px;" width="11.5" height="8.5" viewBox="0 0 11.5 8.5"><path d="M0.4 0.5 L4.6 4.25 L0.4 8 Z M4.8 0.5 L9 4.25 L4.8 8 Z" fill="#d9d9d9"/><rect x="9.4" y="0.5" width="1.6" height="7.5" fill="#d9d9d9"/></svg>
<div class="btn" style="left:599px;top:694.3px;width:88.5px;height:15.5px;"></div>
<span class="t" style="left:605.50px;top:697px;font-size:8.70px;color:#dadada;transform:scaleX(0.952);transform-origin:left center;">No Sync</span>
<svg class="a" style="left:682px;top:698.1px;" width="4" height="9" viewBox="0 0 4 9"><path d="M0 3.4 L2 0.6 L4 3.4 Z M0 5.6 L2 8.4 L4 5.6 Z" fill="#3a3a3a"/></svg>
<div class="btn" style="left:700px;top:694.3px;width:15.8px;height:15.5px;"></div>
<svg class="a" style="left:703.6px;top:697.7px;" width="9" height="9" viewBox="0 0 9 9"><circle cx="4.5" cy="4.5" r="3.9" fill="#f05a34"/><circle cx="4.5" cy="4.5" r="3.9" fill="none" stroke="#f7b19a" stroke-width="0.7"/></svg>
<div class="fld" style="left:720.5px;top:694.3px;width:131.5px;height:15.5px;"></div>
<svg class="a" style="left:723.8px;top:696.4px;" width="12" height="12" viewBox="0 0 12 12"><path d="M3.5 0.8 V8.5 M1 3.2 H6" stroke="#e8e08a" stroke-width="1.5" fill="none"/><circle cx="3.5" cy="9" r="2.1" fill="none" stroke="#e8e08a" stroke-width="1.4"/><path d="M5.5 8.3 L10.5 5 M9 6 L10.3 7.8" stroke="#f4f4f4" stroke-width="1.3" fill="none"/></svg>
<div style="left:821px;top:695.3px;width:1px;height:13.5px;background:#2a2a2a;"></div>
<div style="left:836.7px;top:695.3px;width:1px;height:13.5px;background:#2a2a2a;"></div>
<svg class="a" style="left:824px;top:697.2px;" width="10.5" height="10.5" viewBox="0 0 10.5 10.5"><path d="M2.6 8 L9 2" stroke="#f4f4f4" stroke-width="1.4"/><circle cx="2.6" cy="8" r="1.9" fill="none" stroke="#f4f4f4" stroke-width="1.3"/><path d="M7.2 3.4 L9.2 5.2" stroke="#f4f4f4" stroke-width="1.2"/></svg>
<svg class="a" style="left:839px;top:697px;" width="11.5" height="11" viewBox="0 0 11.5 11"><path d="M2.6 8.4 L9 2.4" stroke="#f4f4f4" stroke-width="1.3"/><circle cx="2.6" cy="8.4" r="1.8" fill="none" stroke="#f4f4f4" stroke-width="1.2"/><path d="M1.5 1.2 L10 9.8 M10 1.2 L5 6" stroke="#e03c3c" stroke-width="1.5"/></svg>
<div style="left:0px;top:711.9px;width:1280px;height:1.9px;background:linear-gradient(90deg,#a3a5a9 0px,#a3a5a9 102px,#c4d6ea 112px,#c4d6ea 128px,#a3a5a9 138px,#a3a5a9 152px,#c4d6ea 162px,#c4d6ea 218px,#a3a5a9 228px,#a3a5a9 322px,#c4d6ea 332px,#c4d6ea 351px,#a3a5a9 361px,#a3a5a9 456px,#c4d6ea 466px,#c4d6ea 512px,#a3a5a9 522px,#a3a5a9 1042px,#c4d6ea 1052px,#c4d6ea 1104px,#a3a5a9 1114px,#a3a5a9 1192px,#c4d6ea 1202px,#c4d6ea 1251px,#a3a5a9 1261px,#a3a5a9 1280px);"></div>
<div style="left:0px;top:713.8px;width:1280px;height:1.6px;background:linear-gradient(90deg,#1c1c1e 0px,#1c1c1e 102px,#2c4668 112px,#2c4668 128px,#1c1c1e 138px,#1c1c1e 152px,#2c4668 162px,#2c4668 218px,#1c1c1e 228px,#1c1c1e 322px,#2c4668 332px,#2c4668 351px,#1c1c1e 361px,#1c1c1e 456px,#2c4668 466px,#2c4668 512px,#1c1c1e 522px,#1c1c1e 1042px,#2c4668 1052px,#2c4668 1104px,#1c1c1e 1114px,#1c1c1e 1192px,#2c4668 1202px,#2c4668 1251px,#1c1c1e 1261px,#1c1c1e 1280px);"></div>
<div style="left:1026.4px;top:34px;width:1.4px;height:678px;background:#2a2a2a;"></div>
<svg class="a" style="left:1269.5px;top:12.3px;" width="10.5" height="10.5" viewBox="0 0 10.5 10.5"><line x1="0" y1="0" x2="10.5" y2="10.5" stroke="#6a6a6a" stroke-width="1.1"/><line x1="3.3" y1="0" x2="10.5" y2="7.2" stroke="#6a6a6a" stroke-width="1.1"/><line x1="6.6" y1="0" x2="10.5" y2="3.9" stroke="#6a6a6a" stroke-width="1.1"/></svg>
<svg class="a" style="left:1270px;top:34.5px;" width="10" height="10" viewBox="0 0 10 10"><line x1="0" y1="0" x2="10" y2="10" stroke="#5a5a5a" stroke-width="1.1"/><line x1="3.3" y1="0" x2="10" y2="6.7" stroke="#5a5a5a" stroke-width="1.1"/><line x1="6.6" y1="0" x2="10" y2="3.4" stroke="#5a5a5a" stroke-width="1.1"/></svg>
<svg class="a" style="left:1016px;top:34.5px;" width="10" height="10" viewBox="0 0 10 10"><line x1="0" y1="0" x2="10" y2="10" stroke="#707070" stroke-width="1.1"/><line x1="3.3" y1="0" x2="10" y2="6.7" stroke="#707070" stroke-width="1.1"/><line x1="6.6" y1="0" x2="10" y2="3.4" stroke="#707070" stroke-width="1.1"/></svg>
<svg class="a" style="left:1027.5px;top:702px;" width="9.5" height="9.5" viewBox="0 0 9.5 9.5"><line x1="0" y1="0" x2="9.5" y2="9.5" stroke="#6a6a6a" stroke-width="1.1"/><line x1="0" y1="3.3" x2="6.2" y2="9.5" stroke="#6a6a6a" stroke-width="1.1"/><line x1="0" y1="6.6" x2="2.9" y2="9.5" stroke="#6a6a6a" stroke-width="1.1"/></svg>
<svg class="a" style="left:1018px;top:54px;" width="6" height="6" viewBox="0 0 6 6"><path d="M3 0.3 V5.7 M0.3 3 H5.7" stroke="#777" stroke-width="1.3"/></svg>
<div style="left:1028px;top:53px;width:252px;height:1.2px;background:#1f1f1f;"></div>
<div class="btn" style="left:1034.6px;top:36.5px;width:22px;height:14.8px;"></div>
<svg class="a" style="left:1037.2px;top:38.8px;" width="11.5" height="10.5" viewBox="0 0 11.5 10.5"><rect x="0" y="0.3" width="11.5" height="4.3" rx="0.8" fill="#f2f2f2"/><rect x="0" y="5.8" width="11.5" height="4.3" rx="0.8" fill="#f2f2f2"/><rect x="1.4" y="1.8" width="5" height="1.3" fill="#333"/><rect x="1.4" y="7.3" width="3.4" height="1.3" fill="#333"/></svg>
<svg class="a" style="left:1051.3px;top:39.4px;" width="4" height="9" viewBox="0 0 4 9"><path d="M0 3.4 L2 0.6 L4 3.4 Z M0 5.6 L2 8.4 L4 5.6 Z" fill="#3a3a3a"/></svg>
<div class="btn" style="left:1063.7px;top:36.5px;width:186px;height:14.8px;"></div>
<div style="left:1110.5px;top:37.3px;width:15.3px;height:13.2px;background:linear-gradient(#2d3f78,#1b2750);"></div>
<div style="left:1078.8px;top:37.5px;width:1px;height:12.8px;background:#262626;"></div>
<div style="left:1094.3px;top:37.5px;width:1px;height:12.8px;background:#262626;"></div>
<div style="left:1109.8px;top:37.5px;width:1px;height:12.8px;background:#262626;"></div>
<div style="left:1125.3px;top:37.5px;width:1px;height:12.8px;background:#262626;"></div>
<div style="left:1140.8px;top:37.5px;width:1px;height:12.8px;background:#262626;"></div>
<div style="left:1156.3px;top:37.5px;width:1px;height:12.8px;background:#262626;"></div>
<div style="left:1171.8px;top:37.5px;width:1px;height:12.8px;background:#262626;"></div>
<div style="left:1187.3px;top:37.5px;width:1px;height:12.8px;background:#262626;"></div>
<div style="left:1202.8px;top:37.5px;width:1px;height:12.8px;background:#262626;"></div>
<div style="left:1218.3px;top:37.5px;width:1px;height:12.8px;background:#262626;"></div>
<div style="left:1233.8px;top:37.5px;width:1px;height:12.8px;background:#262626;"></div>
<svg class="a" style="left:1066.2px;top:38.5px;opacity:.84;" width="10.6" height="10.6" viewBox="0 0 11.5 11.5"><rect x="0.3" y="2.6" width="10.8" height="7.6" rx="1" fill="#8e8e8e"/><rect x="1.4" y="1.3" width="3" height="1.6" fill="#b0b0b0"/><circle cx="5.8" cy="6.4" r="2.7" fill="#2a2a2a" stroke="#d8d8d8" stroke-width="0.9"/></svg>
<svg class="a" style="left:1081.7px;top:38.5px;opacity:.84;" width="10.6" height="10.6" viewBox="0 0 11.5 11.5"><rect x="3.2" y="3.4" width="7.6" height="7.4" fill="#8f8a78" stroke="#b4b0a0" stroke-width="0.7"/><rect x="1.8" y="2" width="7.6" height="7.4" fill="#7486a8" stroke="#aab4c8" stroke-width="0.7"/><rect x="0.5" y="0.6" width="7.4" height="7.2" fill="#93a3c2" stroke="#cfd6e4" stroke-width="0.7"/></svg>
<svg class="a" style="left:1097.2px;top:38.5px;opacity:.84;" width="10.6" height="10.6" viewBox="0 0 11.5 11.5"><circle cx="2.6" cy="2.4" r="2" fill="#dcd890"/><circle cx="3.8" cy="8.2" r="2.6" fill="#e8e8e8"/><rect x="6.6" y="2" width="4.2" height="7.4" rx="0.8" fill="#5577c8"/><rect x="6.6" y="2" width="1.8" height="7.4" fill="#86a6e6"/></svg>
<svg class="a" style="left:1112.7px;top:38.5px;opacity:.84;" width="10.6" height="10.6" viewBox="0 0 11.5 11.5"><circle cx="5.6" cy="5.6" r="5.2" fill="#7aaee2"/><path d="M2 3.4 Q4 1.4 6 2.6 Q6.6 4.4 4.8 5.6 Q3 6.6 2.6 8.6 Q0.9 6.4 2 3.4 Z" fill="#9ad4a0"/><path d="M7.4 5.6 Q9.6 5 10 7 Q9 9.4 7.2 9.6 Q6.4 7.4 7.4 5.6 Z" fill="#9ad4a0"/><circle cx="5.6" cy="5.6" r="5.2" fill="none" stroke="#d9e8f7" stroke-width="0.8"/><ellipse cx="4" cy="3.4" rx="2.4" ry="1.7" fill="#fff" opacity="0.6"/></svg>
<svg class="a" style="left:1128.2px;top:38.5px;opacity:.84;" width="10.6" height="10.6" viewBox="0 0 11.5 11.5"><path d="M0.6 3 L5.7 0.6 L10.8 3 L10.8 8.4 L5.7 11 L0.6 8.4 Z" fill="#e59a3c"/><path d="M0.6 3 L5.7 5.4 L10.8 3 L5.7 0.6 Z" fill="#f4c580"/><path d="M5.7 5.4 L10.8 3 L10.8 8.4 L5.7 11 Z" fill="#c27420"/></svg>
<svg class="a" style="left:1143.7px;top:38.5px;opacity:.84;" width="10.6" height="10.6" viewBox="0 0 11.5 11.5"><rect x="0.8" y="5" width="6" height="3.8" rx="1.9" transform="rotate(-40 3.8 6.9)" fill="none" stroke="#d4d4d4" stroke-width="1.5"/><rect x="4.8" y="2.6" width="6" height="3.8" rx="1.9" transform="rotate(-40 7.8 4.5)" fill="none" stroke="#bdbdbd" stroke-width="1.5"/></svg>
<svg class="a" style="left:1159.2px;top:38.5px;opacity:.84;" width="10.6" height="10.6" viewBox="0 0 11.5 11.5"><path d="M1.2 10.4 L6.4 5.2" stroke="#7fa0d8" stroke-width="2.2" stroke-linecap="round"/><path d="M6 1.6 A3 3 0 1 0 10 5.8 L8 5.6 L6.6 4 Z" fill="#9fb8e4"/></svg>
<svg class="a" style="left:1174.7px;top:38.5px;opacity:.84;" width="10.6" height="10.6" viewBox="0 0 11.5 11.5"><path d="M1 1.6 L10.4 1.6 L5.7 10 Z" fill="none" stroke="#cfcfcf" stroke-width="0.9"/><circle cx="1.2" cy="1.6" r="1.1" fill="#f0f0f0"/><circle cx="10.2" cy="1.6" r="1.1" fill="#f0f0f0"/><circle cx="5.7" cy="10" r="1.1" fill="#f0f0f0"/><circle cx="5.7" cy="4.6" r="0.9" fill="#ddd"/></svg>
<svg class="a" style="left:1190.2px;top:38.5px;opacity:.84;" width="10.6" height="10.6" viewBox="0 0 11.5 11.5"><circle cx="5.7" cy="5.8" r="5" fill="#8a8484"/><circle cx="4.4" cy="4.2" r="2.4" fill="#bdb6b6" opacity="0.8"/><circle cx="5.7" cy="5.8" r="5" fill="none" stroke="#5a5656" stroke-width="0.6"/></svg>
<svg class="a" style="left:1205.7px;top:38.5px;opacity:.84;" width="10.6" height="10.6" viewBox="0 0 11.5 11.5"><rect x="0.4" y="0.5" width="2.7" height="2.7" fill="#d24450"/><rect x="3.1" y="0.5" width="2.7" height="2.7" fill="#f3eded"/><rect x="5.8" y="0.5" width="2.7" height="2.7" fill="#d24450"/><rect x="8.5" y="0.5" width="2.7" height="2.7" fill="#f3eded"/><rect x="0.4" y="3.2" width="2.7" height="2.7" fill="#f3eded"/><rect x="3.1" y="3.2" width="2.7" height="2.7" fill="#d24450"/><rect x="5.8" y="3.2" width="2.7" height="2.7" fill="#f3eded"/><rect x="8.5" y="3.2" width="2.7" height="2.7" fill="#d24450"/><rect x="0.4" y="5.9" width="2.7" height="2.7" fill="#d24450"/><rect x="3.1" y="5.9" width="2.7" height="2.7" fill="#f3eded"/><rect x="5.8" y="5.9" width="2.7" height="2.7" fill="#d24450"/><rect x="8.5" y="5.9" width="2.7" height="2.7" fill="#f3eded"/><rect x="0.4" y="8.6" width="2.7" height="2.7" fill="#f3eded"/><rect x="3.1" y="8.6" width="2.7" height="2.7" fill="#d24450"/><rect x="5.8" y="8.6" width="2.7" height="2.7" fill="#f3eded"/><rect x="8.5" y="8.6" width="2.7" height="2.7" fill="#d24450"/></svg>
<svg class="a" style="left:1221.2px;top:38.5px;opacity:.84;" width="10.6" height="10.6" viewBox="0 0 11.5 11.5"><path d="M3 0.4 L3.7 2.5 L5.8 3.2 L3.7 3.9 L3 6 L2.3 3.9 L0.2 3.2 L2.3 2.5 Z M8.6 0.8 L9.2 2.6 L11 3.2 L9.2 3.8 L8.6 5.6 L8 3.8 L6.2 3.2 L8 2.6 Z M3.2 6 L3.8 7.8 L5.6 8.4 L3.8 9 L3.2 10.8 L2.6 9 L0.8 8.4 L2.6 7.8 Z M8.4 6 L9.1 8 L11 8.6 L9.1 9.2 L8.4 11.2 L7.7 9.2 L5.8 8.6 L7.7 8 Z" fill="#e9dd8a"/></svg>
<svg class="a" style="left:1236.7px;top:38.5px;opacity:.84;" width="10.6" height="10.6" viewBox="0 0 11.5 11.5"><path d="M1 6 L4 9.6 L8.6 3.4" stroke="#5f7fb8" stroke-width="1.7" fill="none"/><circle cx="8.8" cy="2.8" r="2.2" fill="#d9d9d9"/></svg>
<svg class="a" style="left:1035px;top:62.5px;" width="11.5" height="11.5" viewBox="0 0 11.5 11.5"><path d="M0.8 10.8 L4.6 7" stroke="#fff" stroke-width="1.5"/><path d="M2.4 4.6 L7 9.2 L8 6.6 L10.8 4 L7.6 0.8 L5 3.6 Z" fill="#fff"/></svg>
<svg class="a" style="left:1052.3px;top:62px;" width="12" height="12" viewBox="0 0 12 12"><circle cx="2.8" cy="2.6" r="2.2" fill="#e4de98"/><circle cx="4" cy="8.8" r="2.7" fill="#ededed"/><rect x="6.8" y="2.2" width="4.4" height="8" rx="0.8" fill="#5577c8"/><rect x="6.8" y="2.2" width="1.9" height="8" fill="#86a6e6"/></svg>
<svg class="a" style="left:1069.2px;top:65.8px;" width="3.5" height="5" viewBox="0 0 3.5 5"><path d="M0.2 0 L3.2 2.5 L0.2 5 Z" fill="#3a3a3a"/></svg>
<svg class="a" style="left:1083.8px;top:62.6px;" width="11.2" height="11.2" viewBox="0 0 11.2 11.2"><circle cx="5.6" cy="5.6" r="5.2" fill="#7aaee2"/><path d="M2 3.4 Q4 1.4 6 2.6 Q6.6 4.4 4.8 5.6 Q3 6.6 2.6 8.6 Q0.9 6.4 2 3.4 Z" fill="#9ad4a0"/><path d="M7.4 5.6 Q9.6 5 10 7 Q9 9.4 7.2 9.6 Q6.4 7.4 7.4 5.6 Z" fill="#9ad4a0"/><circle cx="5.6" cy="5.6" r="5.2" fill="none" stroke="#d9e8f7" stroke-width="0.8"/><ellipse cx="4" cy="3.4" rx="2.4" ry="1.7" fill="#fff" opacity="0.6"/></svg>
<span class="t" style="left:1098.80px;top:62px;font-size:8.70px;color:#d4d4d4;transform:scaleX(0.984);transform-origin:left center;">World</span>
<div class="fld" style="left:1033px;top:88.3px;width:204.4px;height:15.3px;"></div>
<svg class="a" style="left:1036.8px;top:90.3px;" width="11.2" height="11.2" viewBox="0 0 11.2 11.2"><circle cx="5.6" cy="5.6" r="5.2" fill="#7aaee2"/><path d="M2 3.4 Q4 1.4 6 2.6 Q6.6 4.4 4.8 5.6 Q3 6.6 2.6 8.6 Q0.9 6.4 2 3.4 Z" fill="#9ad4a0"/><path d="M7.4 5.6 Q9.6 5 10 7 Q9 9.4 7.2 9.6 Q6.4 7.4 7.4 5.6 Z" fill="#9ad4a0"/><circle cx="5.6" cy="5.6" r="5.2" fill="none" stroke="#d9e8f7" stroke-width="0.8"/><ellipse cx="4" cy="3.4" rx="2.4" ry="1.7" fill="#fff" opacity="0.6"/></svg>
<svg class="a" style="left:1051.2px;top:91.5px;" width="4" height="9" viewBox="0 0 4 9"><path d="M0 3.4 L2 0.6 L4 3.4 Z M0 5.6 L2 8.4 L4 5.6 Z" fill="#3a3a3a"/></svg>
<div style="left:1057.4px;top:89.3px;width:1px;height:13.3px;background:#2a2a2a;"></div>
<span class="t" style="left:1063.30px;top:90px;font-size:8.70px;color:#f6f6f6;transform:scaleX(1.015);transform-origin:left center;">World</span>
<div style="left:1190px;top:89.3px;width:1px;height:13.3px;background:#2a2a2a;"></div>
<span class="t" style="left:1195.20px;top:90px;font-size:8.80px;color:#e0e0e0;">F</span>
<div style="left:1205.2px;top:89.3px;width:1px;height:13.3px;background:#2a2a2a;"></div>
<svg class="a" style="left:1209.25px;top:91.25px;" width="9.5" height="9.5" viewBox="0 0 9.5 9.5"><path d="M4.75 0.6 V8.9 M0.6 4.75 H8.9" stroke="#fff" stroke-width="2.0" fill="none"/></svg>
<div style="left:1221.5px;top:89.3px;width:1px;height:13.3px;background:#2a2a2a;"></div>
<svg class="a" style="left:1224.75px;top:91.75px;" width="8.5" height="8.5" viewBox="0 0 8.5 8.5"><path d="M1 1 L7.5 7.5 M7.5 1 L1 7.5" stroke="#fff" stroke-width="2.0" fill="none"/></svg>
<div style="left:1030.6px;top:109.2px;width:245.4px;height:1.5px;background:#404040;"></div>
<svg class="a" style="left:1037.2px;top:116px;" width="7" height="7" viewBox="0 0 7 7"><path d="M0 0.3 L6.6 0.3 L3.3 6.6 Z" fill="#8a8a8a"/></svg>
<span class="t" style="left:1046.40px;top:114px;font-size:9.60px;color:#9e9e9e;">Preview</span>
<svg class="a" style="left:1263px;top:112.5px;" width="11.5" height="11.5" viewBox="0 0 11.5 11.5"><line x1="0" y1="0" x2="11.5" y2="11.5" stroke="#444" stroke-width="1.1"/><line x1="3.3" y1="0" x2="11.5" y2="8.2" stroke="#444" stroke-width="1.1"/><line x1="6.6" y1="0" x2="11.5" y2="4.9" stroke="#444" stroke-width="1.1"/></svg>
<div style="left:1033.4px;top:135.3px;width:240px;height:92px;background:#676162;border-radius:3px;box-shadow:0 0 0 0.6px #2a2a2a;"></div>
<div style="left:1030.6px;top:233px;width:245.4px;height:1.5px;background:#404040;"></div>
<svg class="a" style="left:1037.2px;top:239.9px;" width="7" height="7" viewBox="0 0 7 7"><path d="M0 0.3 L6.6 0.3 L3.3 6.6 Z" fill="#8a8a8a"/></svg>
<span class="t" style="left:1046.40px;top:238px;font-size:9.60px;color:#9e9e9e;">World</span>
<svg class="a" style="left:1263px;top:236.4px;" width="11.5" height="11.5" viewBox="0 0 11.5 11.5"><line x1="0" y1="0" x2="11.5" y2="11.5" stroke="#444" stroke-width="1.1"/><line x1="3.3" y1="0" x2="11.5" y2="8.2" stroke="#444" stroke-width="1.1"/><line x1="6.6" y1="0" x2="11.5" y2="4.9" stroke="#444" stroke-width="1.1"/></svg>
<div class="chk" style="left:1035.3px;top:261.4px;width:11.2px;height:11.2px;"></div>
<span class="t" style="left:1052.60px;top:261px;font-size:8.70px;color:#eaeaea;transform:scaleX(0.939);transform-origin:left center;">Paper Sky</span>
<div class="chk" style="left:1117.4px;top:261.4px;width:11.2px;height:11.2px;"></div>
<span class="t" style="left:1134.70px;top:261px;font-size:8.70px;color:#eaeaea;transform:scaleX(0.962);transform-origin:left center;">Blend Sky</span>
<div class="chk" style="left:1199.8px;top:261.4px;width:11.2px;height:11.2px;"></div>
<span class="t" style="left:1217.10px;top:261px;font-size:8.70px;color:#eaeaea;transform:scaleX(0.936);transform-origin:left center;">Real Sky</span>
<span class="t" style="left:1039.80px;top:281px;font-size:8.70px;color:#dcdcdc;transform:scaleX(0.966);transform-origin:left center;">Horizon Color:</span>
<span class="t" style="left:1121.60px;top:281px;font-size:8.70px;color:#5c5c5c;transform:scaleX(0.988);transform-origin:left center;">Zenith Color:</span>
<span class="t" style="left:1204.30px;top:281px;font-size:8.70px;color:#dcdcdc;transform:scaleX(0.985);transform-origin:left center;">Ambient Color:</span>
<div style="left:1033.4px;top:293.4px;width:75.4px;height:15.4px;background:#646464;border-radius:3px;border:1px solid #3a3a3a;"></div>
<div style="left:1115.8px;top:293.4px;width:75.7px;height:15.4px;background:#2d2d2d;border-radius:3px;border:1px solid #262626;"></div>
<div style="left:1198px;top:293.4px;width:76px;height:15.4px;background:#000;border-radius:3px;border:1px solid #363636;"></div>
<div class="num" style="left:1033.4px;top:313.6px;width:116.9px;height:15px;"></div>
<svg class="a" style="left:1037.9px;top:318.8px;" width="3" height="5" viewBox="0 0 3 5"><path d="M3 0 L0.4 2.5 L3 5 Z" fill="#343434"/></svg>
<svg class="a" style="left:1142.8px;top:318.8px;" width="3" height="5" viewBox="0 0 3 5"><path d="M0 0 L2.6 2.5 L0 5 Z" fill="#343434"/></svg>
<span class="t" style="left:1045.50px;top:315px;font-size:8.70px;color:#dcdcdc;transform:scaleX(0.957);transform-origin:left center;">Exposure:</span>
<span class="t" style="right:142.00px;top:315px;font-size:8.90px;color:#dcdcdc;">0.000</span>
<div class="num" style="left:1156.7px;top:313.6px;width:117.3px;height:15px;"></div>
<svg class="a" style="left:1161.2px;top:318.8px;" width="3" height="5" viewBox="0 0 3 5"><path d="M3 0 L0.4 2.5 L3 5 Z" fill="#343434"/></svg>
<svg class="a" style="left:1266.5px;top:318.8px;" width="3" height="5" viewBox="0 0 3 5"><path d="M0 0 L2.6 2.5 L0 5 Z" fill="#343434"/></svg>
<span class="t" style="left:1169.00px;top:315px;font-size:8.70px;color:#dcdcdc;transform:scaleX(0.945);transform-origin:left center;">Range:</span>
<span class="t" style="right:18.50px;top:315px;font-size:8.90px;color:#dcdcdc;">1.000</span>
<div style="left:1030.6px;top:333.7px;width:245.4px;height:1.5px;background:#404040;"></div>
<svg class="a" style="left:1037.2px;top:341.1px;" width="7" height="7" viewBox="0 0 7 7"><path d="M0 0.3 L6.6 0.3 L3.3 6.6 Z" fill="#8a8a8a"/></svg>
<div class="chk" style="left:1046px;top:339px;width:11.3px;height:11.3px;"></div>
<span class="t" style="left:1062.20px;top:339px;font-size:9.60px;color:#9e9e9e;">Ambient Occlusion</span>
<svg class="a" style="left:1263px;top:337.6px;" width="11.5" height="11.5" viewBox="0 0 11.5 11.5"><line x1="0" y1="0" x2="11.5" y2="11.5" stroke="#444" stroke-width="1.1"/><line x1="3.3" y1="0" x2="11.5" y2="8.2" stroke="#444" stroke-width="1.1"/><line x1="6.6" y1="0" x2="11.5" y2="4.9" stroke="#444" stroke-width="1.1"/></svg>
<div class="sld" style="left:1033.5px;top:360.4px;width:116.5px;height:14.6px;"></div>
<span class="t" style="left:1044.80px;top:362px;font-size:8.70px;color:#9aa2ba;">Factor:</span>
<span class="t" style="right:141.40px;top:362px;font-size:8.90px;color:#9aa2ba;">1.00</span>
<div class="btn dim" style="left:1156.5px;top:360.4px;width:117.5px;height:14.6px;"></div>
<span class="t" style="left:1162.90px;top:362px;font-size:8.70px;color:#8e8e8e;">Add</span>
<svg class="a" style="left:1267px;top:363.2px;" width="4" height="9" viewBox="0 0 4 9"><path d="M0 3.4 L2 0.6 L4 3.4 Z M0 5.6 L2 8.4 L4 5.6 Z" fill="#3a3a3a"/></svg>
<div style="left:1030.6px;top:380.6px;width:245.4px;height:1.5px;background:#404040;"></div>
<svg class="a" style="left:1037.2px;top:387.7px;" width="7" height="7" viewBox="0 0 7 7"><path d="M0 0.3 L6.6 0.3 L3.3 6.6 Z" fill="#8a8a8a"/></svg>
<div class="chk" style="left:1046px;top:385.6px;width:11.3px;height:11.3px;"></div>
<span class="t" style="left:1062.20px;top:386px;font-size:9.60px;color:#9e9e9e;transform:scaleX(1.013);transform-origin:left center;">Environment Lighting</span>
<svg class="a" style="left:1263px;top:384.2px;" width="11.5" height="11.5" viewBox="0 0 11.5 11.5"><line x1="0" y1="0" x2="11.5" y2="11.5" stroke="#444" stroke-width="1.1"/><line x1="3.3" y1="0" x2="11.5" y2="8.2" stroke="#444" stroke-width="1.1"/><line x1="6.6" y1="0" x2="11.5" y2="4.9" stroke="#444" stroke-width="1.1"/></svg>
<div class="num dim" style="left:1033.5px;top:407px;width:116.5px;height:14.5px;"></div>
<svg class="a" style="left:1038px;top:411.95px;" width="3" height="5" viewBox="0 0 3 5"><path d="M3 0 L0.4 2.5 L3 5 Z" fill="#343434"/></svg>
<svg class="a" style="left:1142.5px;top:411.95px;" width="3" height="5" viewBox="0 0 3 5"><path d="M0 0 L2.6 2.5 L0 5 Z" fill="#343434"/></svg>
<span class="t" style="left:1045.50px;top:409px;font-size:8.70px;color:#9c9c9c;transform:scaleX(0.967);transform-origin:left center;">Energy:</span>
<span class="t" style="right:142.40px;top:409px;font-size:8.90px;color:#9c9c9c;">1.000</span>
<div class="btn dim" style="left:1156.5px;top:407px;width:117.5px;height:14.5px;"></div>
<span class="t" style="left:1162.90px;top:409px;font-size:8.70px;color:#9c9c9c;">White</span>
<svg class="a" style="left:1267px;top:409.75px;" width="4" height="9" viewBox="0 0 4 9"><path d="M0 3.4 L2 0.6 L4 3.4 Z M0 5.6 L2 8.4 L4 5.6 Z" fill="#3a3a3a"/></svg>
<div style="left:1030.6px;top:427.2px;width:245.4px;height:1.5px;background:#404040;"></div>
<svg class="a" style="left:1037.2px;top:434.2px;" width="7" height="7" viewBox="0 0 7 7"><path d="M0 0.3 L6.6 0.3 L3.3 6.6 Z" fill="#8a8a8a"/></svg>
<div class="chk" style="left:1046px;top:432.1px;width:11.3px;height:11.3px;"></div>
<span class="t" style="left:1062.20px;top:432px;font-size:9.60px;color:#9e9e9e;">Indirect Lighting</span>
<svg class="a" style="left:1263px;top:430.7px;" width="11.5" height="11.5" viewBox="0 0 11.5 11.5"><line x1="0" y1="0" x2="11.5" y2="11.5" stroke="#444" stroke-width="1.1"/><line x1="3.3" y1="0" x2="11.5" y2="8.2" stroke="#444" stroke-width="1.1"/><line x1="6.6" y1="0" x2="11.5" y2="4.9" stroke="#444" stroke-width="1.1"/></svg>
<div class="sld" style="left:1033.5px;top:453.7px;width:116.5px;height:14.6px;"></div>
<span class="t" style="left:1044.80px;top:455px;font-size:8.70px;color:#a2aac2;">Factor:</span>
<span class="t" style="right:141.40px;top:455px;font-size:8.90px;color:#a2aac2;">1.00</span>
<div class="num dim" style="left:1156.5px;top:453.7px;width:117.5px;height:14.6px;"></div>
<svg class="a" style="left:1161px;top:458.7px;" width="3" height="5" viewBox="0 0 3 5"><path d="M3 0 L0.4 2.5 L3 5 Z" fill="#343434"/></svg>
<svg class="a" style="left:1266.5px;top:458.7px;" width="3" height="5" viewBox="0 0 3 5"><path d="M0 0 L2.6 2.5 L0 5 Z" fill="#343434"/></svg>
<span class="t" style="left:1169.20px;top:455px;font-size:8.70px;color:#9c9c9c;transform:scaleX(0.951);transform-origin:left center;">Bounces:</span>
<span class="t" style="right:19.80px;top:455px;font-size:8.90px;color:#9c9c9c;">1</span>
<span class="t" style="left:1039.60px;top:475px;font-size:8.70px;color:#969696;transform:scaleX(1.022);transform-origin:left center;">Only works with Approximate gather method</span>
<div style="left:1030.6px;top:493.2px;width:245.4px;height:1.5px;background:#404040;"></div>
<svg class="a" style="left:1037.2px;top:499.8px;" width="7" height="7" viewBox="0 0 7 7"><path d="M0 0.3 L6.6 0.3 L3.3 6.6 Z" fill="#8a8a8a"/></svg>
<span class="t" style="left:1046.40px;top:498px;font-size:9.60px;color:#9e9e9e;">Gather</span>
<svg class="a" style="left:1263px;top:496.3px;" width="11.5" height="11.5" viewBox="0 0 11.5 11.5"><line x1="0" y1="0" x2="11.5" y2="11.5" stroke="#444" stroke-width="1.1"/><line x1="3.3" y1="0" x2="11.5" y2="8.2" stroke="#444" stroke-width="1.1"/><line x1="6.6" y1="0" x2="11.5" y2="4.9" stroke="#444" stroke-width="1.1"/></svg>
<div class="btn" style="left:1033.5px;top:518.8px;width:240.5px;height:15.2px;"></div>
<div style="left:1034.3px;top:519.6px;width:118.4px;height:13.6px;background:linear-gradient(#222e5e,#121a3c);border-radius:2px 0 0 2px;"></div>
<div style="left:1152.7px;top:519.8px;width:1px;height:13.2px;background:#2a2a2a;"></div>
<span class="t" style="left:1075.50px;top:521px;font-size:8.70px;color:#e0e0e0;transform:scaleX(1.025);transform-origin:left center;">Raytrace</span>
<span class="t" style="left:1188.30px;top:521px;font-size:8.70px;color:#909090;transform:scaleX(1.022);transform-origin:left center;">Approximate</span>
<span class="t" style="left:1039.60px;top:541px;font-size:8.70px;color:#8c8c8c;">Attenuation:</span>
<span class="t" style="left:1162.90px;top:541px;font-size:8.70px;color:#8c8c8c;transform:scaleX(0.972);transform-origin:left center;">Sampling:</span>
<div class="num dim" style="left:1033.5px;top:555.4px;width:116.5px;height:15.1px;"></div>
<svg class="a" style="left:1038px;top:560.65px;" width="3" height="5" viewBox="0 0 3 5"><path d="M3 0 L0.4 2.5 L3 5 Z" fill="#343434"/></svg>
<svg class="a" style="left:1142.5px;top:560.65px;" width="3" height="5" viewBox="0 0 3 5"><path d="M0 0 L2.6 2.5 L0 5 Z" fill="#343434"/></svg>
<span class="t" style="left:1045.50px;top:557px;font-size:8.70px;color:#a0a0a0;">Distance:</span>
<span class="t" style="right:142.40px;top:557px;font-size:8.90px;color:#a0a0a0;">10.000</span>
<div class="btn dim" style="left:1156.5px;top:555.4px;width:117.5px;height:15.1px;"></div>
<span class="t" style="left:1162.90px;top:557px;font-size:8.70px;color:#a0a0a0;transform:scaleX(0.956);transform-origin:left center;">Constant QMC</span>
<svg class="a" style="left:1267px;top:558.45px;" width="4" height="9" viewBox="0 0 4 9"><path d="M0 3.4 L2 0.6 L4 3.4 Z M0 5.6 L2 8.4 L4 5.6 Z" fill="#3a3a3a"/></svg>
<div class="chk" style="left:1035.4px;top:574.7px;width:11.2px;height:11.2px;"></div>
<span class="t" style="left:1052.70px;top:575px;font-size:8.70px;color:#b4b4b4;">Falloff</span>
<div class="num dim" style="left:1156.5px;top:572.8px;width:117.5px;height:14.6px;"></div>
<svg class="a" style="left:1161px;top:577.8px;" width="3" height="5" viewBox="0 0 3 5"><path d="M3 0 L0.4 2.5 L3 5 Z" fill="#343434"/></svg>
<svg class="a" style="left:1266.5px;top:577.8px;" width="3" height="5" viewBox="0 0 3 5"><path d="M0 0 L2.6 2.5 L0 5 Z" fill="#343434"/></svg>
<span class="t" style="left:1169.20px;top:574px;font-size:8.70px;color:#8c8c8c;transform:scaleX(0.951);transform-origin:left center;">Samples:</span>
<span class="t" style="right:19.60px;top:574px;font-size:8.90px;color:#8c8c8c;">5</span>
<div class="num dim" style="left:1033.5px;top:590px;width:116.5px;height:14.7px;"></div>
<svg class="a" style="left:1038px;top:595.05px;" width="3" height="5" viewBox="0 0 3 5"><path d="M3 0 L0.4 2.5 L3 5 Z" fill="#343434"/></svg>
<svg class="a" style="left:1142.5px;top:595.05px;" width="3" height="5" viewBox="0 0 3 5"><path d="M0 0 L2.6 2.5 L0 5 Z" fill="#343434"/></svg>
<span class="t" style="left:1045.50px;top:592px;font-size:8.70px;color:#747474;transform:scaleX(0.977);transform-origin:left center;">Strength:</span>
<span class="t" style="right:142.40px;top:592px;font-size:8.90px;color:#747474;">0.000</span>
<div style="left:1030.6px;top:610px;width:245.4px;height:1.5px;background:#404040;"></div>
<svg class="a" style="left:1037.4px;top:616.9px;" width="7" height="7" viewBox="0 0 7 7"><path d="M0.3 0 L6.6 3.3 L0.3 6.6 Z" fill="#8a8a8a"/></svg>
<div class="chk" style="left:1046px;top:614.8px;width:11.3px;height:11.3px;"></div>
<span class="t" style="left:1062.20px;top:615px;font-size:9.60px;color:#9e9e9e;transform:scaleX(0.938);transform-origin:left center;">Mist</span>
<svg class="a" style="left:1263px;top:613.4px;" width="11.5" height="11.5" viewBox="0 0 11.5 11.5"><line x1="0" y1="0" x2="11.5" y2="11.5" stroke="#444" stroke-width="1.1"/><line x1="3.3" y1="0" x2="11.5" y2="8.2" stroke="#444" stroke-width="1.1"/><line x1="6.6" y1="0" x2="11.5" y2="4.9" stroke="#444" stroke-width="1.1"/></svg>
<div style="left:1030.6px;top:628.6px;width:245.4px;height:1.5px;background:#404040;"></div>
<svg class="a" style="left:1037.4px;top:635.6px;" width="7" height="7" viewBox="0 0 7 7"><path d="M0.3 0 L6.6 3.3 L0.3 6.6 Z" fill="#8a8a8a"/></svg>
<span class="t" style="left:1046.40px;top:634px;font-size:9.60px;color:#9e9e9e;">Custom Properties</span>
<svg class="a" style="left:1263px;top:632.1px;" width="11.5" height="11.5" viewBox="0 0 11.5 11.5"><line x1="0" y1="0" x2="11.5" y2="11.5" stroke="#444" stroke-width="1.1"/><line x1="3.3" y1="0" x2="11.5" y2="8.2" stroke="#444" stroke-width="1.1"/><line x1="6.6" y1="0" x2="11.5" y2="4.9" stroke="#444" stroke-width="1.1"/></svg>
<svg class="a" style="left:1040px;top:331px;" width="30" height="32" viewBox="0 0 30 32"><defs><filter id="rb" x="-20%" y="-20%" width="140%" height="140%"><feGaussianBlur stdDeviation="0.8"/></filter></defs><circle cx="14" cy="14" r="7.3" fill="none" stroke="#e01074" stroke-width="4.9" filter="url(#rb)"/><path d="M14.6 15.2 L14.6 25.8 L17.2 23.4 L19.4 27.8 L21.2 27 L19.2 22.6 L22.6 22.4 Z" fill="#fdeaf2" stroke="#e8a8c4" stroke-width="0.5"/></svg>
</body></html>
